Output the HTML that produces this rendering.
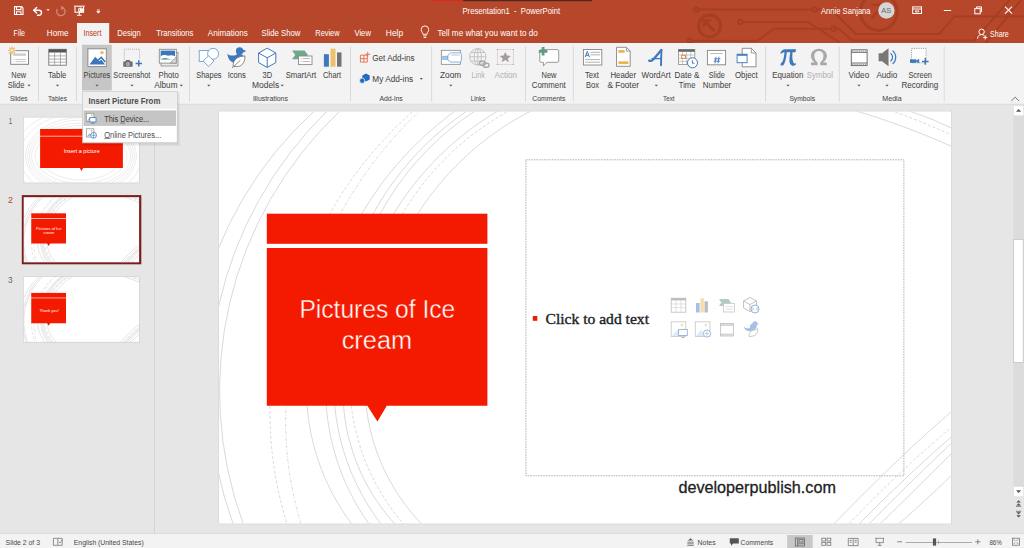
<!DOCTYPE html>
<html><head><meta charset="utf-8"><title>PowerPoint</title>
<style>html,body{margin:0;padding:0;width:1024px;height:548px;overflow:hidden;background:#fff}svg{display:block}text{white-space:pre}</style>
</head><body>
<svg width="1024" height="548" viewBox="0 0 1024 548" font-family="Liberation Sans, sans-serif">
<rect x="0" y="0" width="1024" height="43" fill="#B7472A"/>
<g fill="none" stroke="#A63F22" stroke-width="2" opacity="1"><circle cx="696.2" cy="9.6" r="2.2"/><path d="M698.4 9.6H812.6"/><circle cx="814.8" cy="9.6" r="2.2"/><path d="M817 9.6H831L856 34H939.2L954.4 16.4H1024"/><circle cx="740.3" cy="21.9" r="2.2"/><path d="M742.5 21.9H807.9L842 44"/><circle cx="689.7" cy="40.8" r="2.2"/><path d="M691.9 40.8H757.3L773.8 28.7H831.3"/><circle cx="833.5" cy="28.7" r="2.2"/><path d="M835.7 28.7H839.4L852 40.6H974.3L1009.5 0"/><path d="M984.9 44L1021 0"/><circle cx="709.6" cy="26" r="11" stroke-width="3"/><path d="M703 19.5H711.5L703 28Z" fill="#A63F22" stroke-width="0.5"/><path d="M705.5 22L714.5 31" stroke-width="3"/><circle cx="878.8" cy="12" r="18.4" stroke-width="3"/><path d="M871.5 4.7H884M884 4.7L871.5 18.5" stroke-width="2.6"/></g>
<rect x="431.5" y="0" width="31.7" height="1.2" fill="#D62A22"/><rect x="463.2" y="0" width="128.7" height="1.2" fill="#4A2A22"/>
<g fill="none" stroke="#FFFFFF" stroke-width="1.1"><path d="M14.5 6.6H21.6L23 8V14.5H14.5Z"/><path d="M16.5 6.6V9.6H21V6.6"/><path d="M16.5 14.5V11.8H21V14.5"/></g>
<g fill="none" stroke="#FFFFFF" stroke-width="1.4" stroke-linecap="round"><path d="M34 10.3H39A2.5 2.5 0 0 1 39 15.3H37.5"/><path d="M36.6 7.6L33.8 10.3L36.6 13"/></g>
<path d="M46.4 9.3H49.7L48.05 10.9Z" fill="#fff"/>
<g fill="none" stroke="#fff" stroke-opacity="0.35" stroke-width="1.3"><path d="M62.2 7.5A4.2 4.2 0 1 1 57.5 9"/><path d="M61 6.2L62.8 7.7L61.2 9.5"/></g>
<g fill="none" stroke="#fff" stroke-width="1.1"><path d="M73.9 6.2H84.7"/><path d="M75 7V12.3H83.6V7"/><path d="M79.3 12.3V14.8M77 15.3H81.6"/><circle cx="80.6" cy="10" r="2"/><path d="M80.4 8.9L81.9 10L80.4 11.1Z" fill="#fff"/></g>
<path d="M96.9 10H99.8M96.9 11.4H99.8L98.35 13.2Z" stroke="#fff" stroke-width="0.8" fill="#fff"/>
<text x="462.50" y="14.2" font-size="8.6" font-family="Liberation Sans" font-weight="normal" fill="#FFFFFF" textLength="97.55" lengthAdjust="spacingAndGlyphs" xml:space="preserve">Presentation1  -  PowerPoint</text>
<text x="821.00" y="14.2" font-size="8.6" font-family="Liberation Sans" font-weight="normal" fill="#FFFFFF" textLength="49.60" lengthAdjust="spacingAndGlyphs" xml:space="preserve">Annie Sanjana</text>
<circle cx="886.4" cy="10.5" r="8.2" fill="#D6D6D6"/>
<text x="881.20" y="13.3" font-size="6.8" font-family="Liberation Sans" font-weight="normal" fill="#666666" textLength="9.89" lengthAdjust="spacingAndGlyphs" xml:space="preserve">AS</text>
<g fill="none" stroke="#fff" stroke-width="1"><rect x="912.7" y="6.9" width="8.8" height="6.6"/><path d="M912.7 9H921.5"/><path d="M915 11.3L916.4 10.2V12.4ZM919.2 11.3L917.8 10.2V12.4Z" fill="#fff" stroke-width="0.5"/><path d="M943.8 10.5H951.1"/><rect x="974.8" y="8.6" width="5.4" height="5.2"/><path d="M976.6 8.6V6.9H981.5V11.8H980.2"/><path d="M1005 6.6L1012 13.6M1012 6.6L1005 13.6" stroke-width="1.1"/></g>
<g fill="none" stroke="#fff" stroke-width="1"><circle cx="981.6" cy="31.8" r="2.7"/><path d="M977.4 38.7C977.8 35.6 979.4 34.6 981.6 34.6C982.8 34.6 983.8 35 984.4 35.7"/><path d="M985.2 35.4V39.4M983.2 37.4H987.2"/></g>
<text x="990.10" y="36.9" font-size="8.6" font-family="Liberation Sans" font-weight="normal" fill="#FFFFFF" textLength="18.62" lengthAdjust="spacingAndGlyphs" xml:space="preserve">Share</text>
<rect x="77" y="23" width="32.2" height="20.5" fill="#F3F3F3"/>
<text x="13.60" y="36.1" font-size="8.6" font-family="Liberation Sans" font-weight="normal" fill="#FFFFFF" textLength="11.42" lengthAdjust="spacingAndGlyphs" xml:space="preserve">File</text>
<text x="46.80" y="36.1" font-size="8.6" font-family="Liberation Sans" font-weight="normal" fill="#FFFFFF" textLength="21.69" lengthAdjust="spacingAndGlyphs" xml:space="preserve">Home</text>
<text x="117.20" y="36.1" font-size="8.6" font-family="Liberation Sans" font-weight="normal" fill="#FFFFFF" textLength="23.61" lengthAdjust="spacingAndGlyphs" xml:space="preserve">Design</text>
<text x="156.30" y="36.1" font-size="8.6" font-family="Liberation Sans" font-weight="normal" fill="#FFFFFF" textLength="37.16" lengthAdjust="spacingAndGlyphs" xml:space="preserve">Transitions</text>
<text x="207.80" y="36.1" font-size="8.6" font-family="Liberation Sans" font-weight="normal" fill="#FFFFFF" textLength="39.98" lengthAdjust="spacingAndGlyphs" xml:space="preserve">Animations</text>
<text x="261.60" y="36.1" font-size="8.6" font-family="Liberation Sans" font-weight="normal" fill="#FFFFFF" textLength="38.88" lengthAdjust="spacingAndGlyphs" xml:space="preserve">Slide Show</text>
<text x="315.30" y="36.1" font-size="8.6" font-family="Liberation Sans" font-weight="normal" fill="#FFFFFF" textLength="24.31" lengthAdjust="spacingAndGlyphs" xml:space="preserve">Review</text>
<text x="354.40" y="36.1" font-size="8.6" font-family="Liberation Sans" font-weight="normal" fill="#FFFFFF" textLength="16.59" lengthAdjust="spacingAndGlyphs" xml:space="preserve">View</text>
<text x="385.80" y="36.1" font-size="8.6" font-family="Liberation Sans" font-weight="normal" fill="#FFFFFF" textLength="17.38" lengthAdjust="spacingAndGlyphs" xml:space="preserve">Help</text>
<text x="437.40" y="36.1" font-size="8.6" font-family="Liberation Sans" font-weight="normal" fill="#FFFFFF" textLength="100.39" lengthAdjust="spacingAndGlyphs" xml:space="preserve">Tell me what you want to do</text>
<text x="83.40" y="36.1" font-size="8.6" font-family="Liberation Sans" font-weight="normal" fill="#B7472A" textLength="18.08" lengthAdjust="spacingAndGlyphs" stroke="#B7472A" stroke-width="0.05" xml:space="preserve">Insert</text>
<g fill="none" stroke="#fff" stroke-width="0.9"><path d="M422.9 34.3C422.9 32.6 421.2 31.6 421.2 29.6A3.75 3.75 0 0 1 428.7 29.6C428.7 31.6 427 32.6 427 34.3Z"/><path d="M423.2 35.9H426.7M423.7 37.5H426.2"/></g>
<rect x="0" y="43" width="1024" height="61" fill="#F3F3F3"/>
<rect x="0" y="103.8" width="1024" height="1" fill="#D6D6D6"/>
<rect x="38.0" y="46.5" width="1" height="55" fill="#DADADA"/>
<rect x="75.9" y="46.5" width="1" height="55" fill="#DADADA"/>
<rect x="189.0" y="46.5" width="1" height="55" fill="#DADADA"/>
<rect x="350.0" y="46.5" width="1" height="55" fill="#DADADA"/>
<rect x="431.1" y="46.5" width="1" height="55" fill="#DADADA"/>
<rect x="525.0" y="46.5" width="1" height="55" fill="#DADADA"/>
<rect x="572.8" y="46.5" width="1" height="55" fill="#DADADA"/>
<rect x="765.1" y="46.5" width="1" height="55" fill="#DADADA"/>
<rect x="838.8" y="46.5" width="1" height="55" fill="#DADADA"/>
<rect x="943.7" y="46.5" width="1" height="55" fill="#DADADA"/>
<g><rect x="10.7" y="50.7" width="17.8" height="13.6" fill="#fff" stroke="#858585" stroke-width="1"/><rect x="13.2" y="53.3" width="12.8" height="2.6" fill="#CFCFCF"/><path d="M13.2 59.5H14M15.4 59.5H26M13.2 61.6H14M15.4 61.6H26" stroke="#C4C4C4" stroke-width="0.9"/><circle cx="12.07" cy="50.5" r="3" fill="#F3F3F3"/><g stroke="#EDB45A" stroke-width="1.2"><path d="M13.67 50.50L16.07 50.50M13.20 51.63L14.90 53.33M12.07 52.10L12.07 54.50M10.94 51.63L9.24 53.33M10.47 50.50L8.07 50.50M10.94 49.37L9.24 47.67M12.07 48.90L12.07 46.50M13.20 49.37L14.90 47.67"/></g><circle cx="12.07" cy="50.5" r="1.3" fill="#fff" stroke="#EDB45A" stroke-width="0.7"/></g>
<text x="11.30" y="78" font-size="8.4" font-family="Liberation Sans" font-weight="normal" fill="#474747" textLength="14.86" lengthAdjust="spacingAndGlyphs" stroke="#474747" stroke-width="0.05" xml:space="preserve">New</text>
<text x="7.70" y="88.2" font-size="8.4" font-family="Liberation Sans" font-weight="normal" fill="#474747" textLength="16.69" lengthAdjust="spacingAndGlyphs" stroke="#474747" stroke-width="0.05" xml:space="preserve">Slide</text>
<path d="M27.4 84.69999999999999H30.6L29 86.5Z" fill="#555555"/>
<text x="9.90" y="100.7" font-size="7.8" font-family="Liberation Sans" font-weight="normal" fill="#474747" textLength="17.72" lengthAdjust="spacingAndGlyphs" stroke="#474747" stroke-width="0.05" xml:space="preserve">Slides</text>
<g><rect x="48.8" y="49.3" width="17.5" height="15.9" fill="#fff" stroke="#777" stroke-width="0.9"/><rect x="48.8" y="49.3" width="17.5" height="3.2" fill="#555"/><path d="M48.8 55.9H66.3M48.8 59.1H66.3M48.8 62.2H66.3M54.6 52.5V65.2M60.5 52.5V65.2" stroke="#9B9B9B" stroke-width="0.8"/></g>
<text x="48.00" y="78" font-size="8.4" font-family="Liberation Sans" font-weight="normal" fill="#474747" textLength="18.39" lengthAdjust="spacingAndGlyphs" stroke="#474747" stroke-width="0.05" xml:space="preserve">Table</text>
<path d="M55.9 84.69999999999999H59.1L57.5 86.5Z" fill="#555555"/>
<text x="48.00" y="100.7" font-size="7.8" font-family="Liberation Sans" font-weight="normal" fill="#474747" textLength="18.91" lengthAdjust="spacingAndGlyphs" stroke="#474747" stroke-width="0.05" xml:space="preserve">Tables</text>
<rect x="82" y="44.8" width="29.8" height="45.7" fill="#C6C6C6"/>
<g><rect x="87.9" y="48.8" width="18.4" height="17.8" fill="#fff" stroke="#8C8C8C" stroke-width="1"/><path d="M89.5 64.6L95.2 56.8L99.5 61.2L101.3 59.4L105 64.6Z" fill="#3C77BD"/><path d="M97.8 60.5L101.3 57.3L105.2 62" fill="none" stroke="#3C77BD" stroke-width="1.6"/><circle cx="102" cy="52.6" r="1.7" fill="#F2B74F"/></g>
<text x="83.60" y="77.8" font-size="8.4" font-family="Liberation Sans" font-weight="normal" fill="#474747" textLength="26.56" lengthAdjust="spacingAndGlyphs" stroke="#474747" stroke-width="0.05" xml:space="preserve">Pictures</text>
<path d="M95.4 84.69999999999999H98.6L97 86.5Z" fill="#555555"/>
<g><path d="M124.3 59.5V49.2H139.6V59.5" fill="none" stroke="#8A8A8A" stroke-width="0.7" stroke-dasharray="0.9 1.1"/><path d="M123.3 61.5H125.2L126.2 60H129.5L130.5 61.5H132.6V66.8H123.3Z" fill="#6B6B6B"/><circle cx="127.9" cy="64" r="1.7" fill="#F3F3F3"/><circle cx="127.9" cy="64" r="0.9" fill="#6B6B6B"/><path d="M135.6 63.4H142M138.8 60.2V66.6" stroke="#3C77BD" stroke-width="1.5"/></g>
<text x="113.30" y="78" font-size="8.4" font-family="Liberation Sans" font-weight="normal" fill="#474747" textLength="37.11" lengthAdjust="spacingAndGlyphs" stroke="#474747" stroke-width="0.05" xml:space="preserve">Screenshot</text>
<path d="M130.4 84.69999999999999H133.6L132 86.5Z" fill="#555555"/>
<g><rect x="161" y="52.5" width="17" height="13.5" fill="#E9E9E9" stroke="#8A8A8A" stroke-width="0.8"/><rect x="159.3" y="49.3" width="17" height="13.8" fill="#fff" stroke="#8A8A8A" stroke-width="0.9"/><rect x="160.6" y="50.6" width="14.4" height="8.6" fill="#3C77BD"/><path d="M160.6 56.5C163 54.5 166 55 168 55.8C170 54.8 173 55 175 56.2V59.2H160.6Z" fill="#fff"/><path d="M160.6 59.5C163 57.5 167 57.5 170 59.5Z" fill="#5E9E7E"/><path d="M176.3 57L170 63.1H176.3Z" fill="#D9D9D9" stroke="#8A8A8A" stroke-width="0.7"/></g>
<text x="158.60" y="78" font-size="8.4" font-family="Liberation Sans" font-weight="normal" fill="#474747" textLength="20.09" lengthAdjust="spacingAndGlyphs" stroke="#474747" stroke-width="0.05" xml:space="preserve">Photo</text>
<text x="154.30" y="88.2" font-size="8.4" font-family="Liberation Sans" font-weight="normal" fill="#474747" textLength="23.18" lengthAdjust="spacingAndGlyphs" stroke="#474747" stroke-width="0.05" xml:space="preserve">Album</text>
<path d="M179.70000000000002 84.69999999999999H182.9L181.3 86.5Z" fill="#555555"/>
<g fill="#fff" stroke="#5A93D0" stroke-width="0.8"><rect x="199.2" y="50.6" width="10.4" height="10.8"/><circle cx="213.1" cy="53.8" r="5.5"/><path d="M208.6 55.7L214 61.1L208.6 66.5L203.2 61.1Z"/></g>
<text x="196.30" y="78" font-size="8.4" font-family="Liberation Sans" font-weight="normal" fill="#474747" textLength="25.17" lengthAdjust="spacingAndGlyphs" stroke="#474747" stroke-width="0.05" xml:space="preserve">Shapes</text>
<path d="M207.20000000000002 84.69999999999999H210.4L208.8 86.5Z" fill="#555555"/>
<g><circle cx="239.6" cy="50.9" r="3.7" fill="#3E79BD"/><path d="M242.5 49.6L246.4 50.9L242.5 52.7Z" fill="#3E79BD"/><path d="M227.4 53.4C229 55.6 232.5 56.2 236.2 55L237.3 53.2L242.6 54.8C243.8 58.3 242 61.8 237.8 62.8C233.2 63.8 227.8 61 227.4 53.4Z" fill="#3E79BD"/><path d="M233.2 66.4C232.8 61.2 236 57.6 240.6 56.6L245 55.9C245 60.6 243.6 64.4 240.2 65.9C238.2 66.7 235.6 66.7 233.2 66.4Z" fill="#fff" stroke="#7A7A7A" stroke-width="0.9"/><path d="M231.9 68L240.3 60.4" fill="none" stroke="#7A7A7A" stroke-width="0.9"/></g>
<text x="227.70" y="78" font-size="8.4" font-family="Liberation Sans" font-weight="normal" fill="#474747" textLength="18.07" lengthAdjust="spacingAndGlyphs" stroke="#474747" stroke-width="0.05" xml:space="preserve">Icons</text>
<g fill="#fff" stroke="#3E79BD" stroke-width="1" stroke-linejoin="round"><path d="M267.2 48.2L275.8 53V62.6L267.2 67.4L258.6 62.6V53Z"/><path d="M258.6 53L267.2 57.8L275.8 53M267.2 57.8V67.4" fill="none"/></g>
<text x="262.50" y="78" font-size="8.4" font-family="Liberation Sans" font-weight="normal" fill="#474747" textLength="9.54" lengthAdjust="spacingAndGlyphs" stroke="#474747" stroke-width="0.05" xml:space="preserve">3D</text>
<text x="252.00" y="88.3" font-size="8.4" font-family="Liberation Sans" font-weight="normal" fill="#474747" textLength="27.19" lengthAdjust="spacingAndGlyphs" stroke="#474747" stroke-width="0.05" xml:space="preserve">Models</text>
<path d="M280.59999999999997 84.69999999999999H283.8L282.2 86.5Z" fill="#555555"/>
<g><path d="M292 50.5H304.5L308 55L304.5 59.3H292L295.3 55Z" fill="#6EA98A"/><rect x="298.5" y="56" width="13.5" height="8.6" fill="#fff" stroke="#8A8A8A" stroke-width="0.9"/><path d="M300.5 58.6H301.5M302.8 58.6H310M300.5 61.6H301.5M302.8 61.6H310" stroke="#A0A0A0" stroke-width="0.8"/></g>
<text x="285.70" y="78" font-size="8.4" font-family="Liberation Sans" font-weight="normal" fill="#474747" textLength="30.58" lengthAdjust="spacingAndGlyphs" stroke="#474747" stroke-width="0.05" xml:space="preserve">SmartArt</text>
<g><rect x="323.9" y="54.2" width="5" height="12.5" fill="#3E79BD"/><rect x="330.5" y="48.6" width="5" height="18.1" fill="#EDC26C"/><rect x="337" y="52.4" width="4.5" height="14.3" fill="#737373"/></g>
<text x="323.00" y="78" font-size="8.4" font-family="Liberation Sans" font-weight="normal" fill="#474747" textLength="18.10" lengthAdjust="spacingAndGlyphs" stroke="#474747" stroke-width="0.05" xml:space="preserve">Chart</text>
<text x="252.90" y="100.7" font-size="7.8" font-family="Liberation Sans" font-weight="normal" fill="#474747" textLength="35.01" lengthAdjust="spacingAndGlyphs" stroke="#474747" stroke-width="0.05" xml:space="preserve">Illustrations</text>
<g fill="none" stroke="#E2683F" stroke-width="0.85"><path d="M360.4 55.2H367.3V62.1H360.4ZM363.85 55.2V62.1M360.4 58.65H367.3"/><path d="M367.7 51.8V56.8M365.2 54.3H370.2"/></g>
<text x="372.30" y="61" font-size="8.4" font-family="Liberation Sans" font-weight="normal" fill="#474747" textLength="42.38" lengthAdjust="spacingAndGlyphs" stroke="#474747" stroke-width="0.05" xml:space="preserve">Get Add-ins</text>
<g fill="#1F6DC2"><path d="M366 73.5L369.7 75.4V79.6L366 81.5L362.3 79.6V75.4Z"/><circle cx="362.2" cy="80.7" r="2.6" stroke="#F3F3F3" stroke-width="0.7"/></g>
<text x="372.30" y="81.6" font-size="8.4" font-family="Liberation Sans" font-weight="normal" fill="#474747" textLength="40.88" lengthAdjust="spacingAndGlyphs" stroke="#474747" stroke-width="0.05" xml:space="preserve">My Add-ins</text>
<path d="M419.7 78.0H422.90000000000003L421.3 79.80000000000001Z" fill="#555555"/>
<text x="379.40" y="100.6" font-size="7.8" font-family="Liberation Sans" font-weight="normal" fill="#474747" textLength="23.31" lengthAdjust="spacingAndGlyphs" stroke="#474747" stroke-width="0.05" xml:space="preserve">Add-ins</text>
<g><rect x="441.3" y="50.3" width="19" height="14" fill="#fff" stroke="#858585" stroke-width="0.8"/><rect x="442.7" y="56.2" width="5.2" height="3.2" fill="#A9C6E8" stroke="#6A9FD8" stroke-width="0.6"/><path d="M447.9 55.4L450.8 52.8H459.8Q461.4 52.8 461.4 54.4V60.4Q461.4 62 459.8 62H450.8L447.9 60.2Z" fill="#fff" stroke="#6A9FD8" stroke-width="0.8"/><path d="M451.5 55H459.5" stroke="#BBBBBB" stroke-width="0.9"/></g>
<text x="440.00" y="78" font-size="8.4" font-family="Liberation Sans" font-weight="normal" fill="#474747" textLength="21.18" lengthAdjust="spacingAndGlyphs" stroke="#474747" stroke-width="0.05" xml:space="preserve">Zoom</text>
<path d="M449.2 84.69999999999999H452.40000000000003L450.8 86.5Z" fill="#555555"/>
<g fill="none" stroke="#BDBDBD" stroke-width="0.9"><circle cx="477.8" cy="56.8" r="8.2"/><ellipse cx="477.8" cy="56.8" rx="3.6" ry="8.2"/><path d="M469.6 56.8H486M471 52.5H484.6M471 61.1H484.6M477.8 48.6V65"/></g><g fill="none" stroke="#A8A8A8" stroke-width="1.4"><rect x="479.5" y="61.2" width="5.8" height="4" rx="2"/><rect x="483.2" y="63.2" width="5.8" height="4" rx="2"/></g>
<text x="471.60" y="78" font-size="8.4" font-family="Liberation Sans" font-weight="normal" fill="#B4B4B4" textLength="13.20" lengthAdjust="spacingAndGlyphs" stroke="#B4B4B4" stroke-width="0.05" xml:space="preserve">Link</text>
<g><rect x="497.3" y="49.6" width="16" height="14.8" fill="#F6F0F3" stroke="#D2CBCE" stroke-width="0.7"/><path d="M496.8 49.1h1v1h-1zM512.8 49.1h1v1h-1zM496.8 63.9h1v1h-1zM512.8 63.9h1v1h-1z" fill="#999"/><path d="M505.3 52L507 55.6L510.9 55.9L507.9 58.4L508.9 62.2L505.3 60.1L501.7 62.2L502.7 58.4L499.7 55.9L503.6 55.6Z" fill="#9E9E9E"/></g>
<text x="494.50" y="78" font-size="8.4" font-family="Liberation Sans" font-weight="normal" fill="#B4B4B4" textLength="22.47" lengthAdjust="spacingAndGlyphs" stroke="#B4B4B4" stroke-width="0.05" xml:space="preserve">Action</text>
<text x="470.70" y="100.7" font-size="7.8" font-family="Liberation Sans" font-weight="normal" fill="#474747" textLength="14.72" lengthAdjust="spacingAndGlyphs" stroke="#474747" stroke-width="0.05" xml:space="preserve">Links</text>
<g><path d="M541.2 49.6H557.3Q558.7 49.6 558.7 51V60.9Q558.7 62.3 557.3 62.3H547L543.4 65.9V62.3H541.2Q539.8 62.3 539.8 60.9V51Q539.8 49.6 541.2 49.6Z" fill="#fff" stroke="#8E8E8E" stroke-width="0.9"/><path d="M543.1 47V55.6M538.8 51.3H547.4" stroke="#5E9E7E" stroke-width="2.8"/></g>
<text x="541.50" y="78" font-size="8.4" font-family="Liberation Sans" font-weight="normal" fill="#474747" textLength="15.05" lengthAdjust="spacingAndGlyphs" stroke="#474747" stroke-width="0.05" xml:space="preserve">New</text>
<text x="531.80" y="88.2" font-size="8.4" font-family="Liberation Sans" font-weight="normal" fill="#474747" textLength="33.97" lengthAdjust="spacingAndGlyphs" stroke="#474747" stroke-width="0.05" xml:space="preserve">Comment</text>
<text x="532.30" y="100.7" font-size="7.8" font-family="Liberation Sans" font-weight="normal" fill="#474747" textLength="33.11" lengthAdjust="spacingAndGlyphs" stroke="#474747" stroke-width="0.05" xml:space="preserve">Comments</text>
<g><rect x="583.4" y="49.5" width="18.4" height="15.5" fill="#fff" stroke="#858585" stroke-width="0.9"/><path d="M585.2 57.2L587.3 51.4L589.4 57.2M585.9 55.3H588.7" fill="none" stroke="#3E79BD" stroke-width="1"/><path d="M590.6 52.3H600M590.6 54.8H600M585.2 59.6H600M585.2 62.2H600" stroke="#9E9E9E" stroke-width="0.8"/></g>
<text x="585.00" y="78" font-size="8.4" font-family="Liberation Sans" font-weight="normal" fill="#474747" textLength="13.99" lengthAdjust="spacingAndGlyphs" stroke="#474747" stroke-width="0.05" xml:space="preserve">Text</text>
<text x="586.00" y="88.2" font-size="8.4" font-family="Liberation Sans" font-weight="normal" fill="#474747" textLength="12.88" lengthAdjust="spacingAndGlyphs" stroke="#474747" stroke-width="0.05" xml:space="preserve">Box</text>
<g><path d="M616.5 47.3H626.4L630.2 51.1V66.3H616.5Z" fill="#fff" stroke="#858585" stroke-width="0.9"/><path d="M626.4 47.3V51.1H630.2" fill="none" stroke="#858585" stroke-width="0.8"/><rect x="618.4" y="50" width="6.2" height="2.8" fill="#EDB54F"/><rect x="618.4" y="61.3" width="10" height="2.8" fill="#EDB54F"/></g>
<text x="610.40" y="78" font-size="8.4" font-family="Liberation Sans" font-weight="normal" fill="#474747" textLength="25.70" lengthAdjust="spacingAndGlyphs" stroke="#474747" stroke-width="0.05" xml:space="preserve">Header</text>
<text x="607.40" y="88.2" font-size="8.4" font-family="Liberation Sans" font-weight="normal" fill="#474747" textLength="31.59" lengthAdjust="spacingAndGlyphs" stroke="#474747" stroke-width="0.05" xml:space="preserve">&amp; Footer</text>
<g fill="none" stroke="#3E79BD" stroke-linecap="round"><path d="M649.2 60.6Q651.5 61.6 653.5 59.2L661.4 50" stroke-width="2.3"/><path d="M661.4 50L661 65.3" stroke-width="1.9"/><path d="M652 58.6H660.6" stroke-width="1.3"/></g>
<text x="641.60" y="78" font-size="8.4" font-family="Liberation Sans" font-weight="normal" fill="#474747" textLength="29.16" lengthAdjust="spacingAndGlyphs" stroke="#474747" stroke-width="0.05" xml:space="preserve">WordArt</text>
<path d="M654.6999999999999 84.69999999999999H657.9L656.3 86.5Z" fill="#555555"/>
<g><rect x="678.4" y="49.4" width="16.4" height="15" fill="#fff" stroke="#8A8A8A" stroke-width="0.8"/><rect x="678.4" y="49.4" width="16.4" height="2.4" fill="#666"/><path d="M678.4 55H694.8M678.4 58.3H694.8M678.4 61.4H694.8M682.5 51.8V64.4M686.6 51.8V64.4M690.7 51.8V64.4" stroke="#B0B0B0" stroke-width="0.7"/><rect x="681.6" y="55.3" width="3.8" height="3.1" fill="#fff" stroke="#E8834F" stroke-width="1"/><circle cx="692.5" cy="62.8" r="5" fill="#fff" stroke="#3E79BD" stroke-width="1"/><path d="M692.3 60.2V63.2H694.6" fill="none" stroke="#555" stroke-width="0.8"/></g>
<text x="674.60" y="78" font-size="8.4" font-family="Liberation Sans" font-weight="normal" fill="#474747" textLength="24.70" lengthAdjust="spacingAndGlyphs" stroke="#474747" stroke-width="0.05" xml:space="preserve">Date &amp;</text>
<text x="678.80" y="88.2" font-size="8.4" font-family="Liberation Sans" font-weight="normal" fill="#474747" textLength="16.59" lengthAdjust="spacingAndGlyphs" stroke="#474747" stroke-width="0.05" xml:space="preserve">Time</text>
<g><rect x="707.4" y="50.4" width="18.2" height="14.4" fill="#fff" stroke="#858585" stroke-width="0.9"/><path d="M710.2 53.5H722.8" stroke="#B5B5B5" stroke-width="0.9"/><path d="M716 56.8L715 63.3M719 56.8L718 63.3M714 58.9H720.4M713.6 61.2H720" stroke="#3E79BD" stroke-width="0.9"/></g>
<text x="708.80" y="78" font-size="8.4" font-family="Liberation Sans" font-weight="normal" fill="#474747" textLength="15.91" lengthAdjust="spacingAndGlyphs" stroke="#474747" stroke-width="0.05" xml:space="preserve">Slide</text>
<text x="702.70" y="88.2" font-size="8.4" font-family="Liberation Sans" font-weight="normal" fill="#474747" textLength="28.60" lengthAdjust="spacingAndGlyphs" stroke="#474747" stroke-width="0.05" xml:space="preserve">Number</text>
<g><path d="M742.2 48.3H751.3L756 53V66.8H742.2Z" fill="#fff" stroke="#858585" stroke-width="0.9"/><path d="M751.3 48.3V53H756" fill="none" stroke="#858585" stroke-width="0.8"/><rect x="737.1" y="54.2" width="10" height="8.5" fill="#fff" stroke="#3E79BD" stroke-width="0.9"/><rect x="737.1" y="54.2" width="10" height="1.6" fill="#3E79BD"/></g>
<text x="734.90" y="78" font-size="8.4" font-family="Liberation Sans" font-weight="normal" fill="#474747" textLength="22.77" lengthAdjust="spacingAndGlyphs" stroke="#474747" stroke-width="0.05" xml:space="preserve">Object</text>
<text x="663.00" y="100.7" font-size="7.8" font-family="Liberation Sans" font-weight="normal" fill="#474747" textLength="11.62" lengthAdjust="spacingAndGlyphs" stroke="#474747" stroke-width="0.05" xml:space="preserve">Text</text>
<path d="M780.3 53.2C781.3 50.5 782.8 49.3 785.5 49.3H796.2L795.4 52.3H792.6C792.2 55.5 792 59 793.2 62C793.8 63.4 794.8 64 795.8 63.3L796.3 64C795.2 65.4 793.8 65.9 792.3 65.7C790.2 65.2 789.4 63 789.4 60.3C789.4 57.7 789.8 55 790.3 52.3H786.8C786.4 56 785.8 60.5 784.3 63.7C783.8 64.9 782.8 65.6 781.8 65.6C780.8 65.6 780.3 64.9 780.6 64C781 63 782.3 62.3 782.9 60.8C783.8 58.3 784.3 55 784.5 52.3C782.8 52.3 781.8 53 781 54Z" fill="#3E79BD"/>
<text x="772.20" y="78" font-size="8.4" font-family="Liberation Sans" font-weight="normal" fill="#474747" textLength="31.18" lengthAdjust="spacingAndGlyphs" stroke="#474747" stroke-width="0.05" xml:space="preserve">Equation</text>
<path d="M786.4 84.69999999999999H789.6L788 86.5Z" fill="#555555"/>
<path d="M811 65.3V62.5H814.8C812.5 61 810.9 58.6 810.9 55.8C810.9 51.7 814.5 48.7 818.9 48.7C823.3 48.7 826.9 51.7 826.9 55.8C826.9 58.6 825.3 61 823 62.5H826.8V65.3H820.2V62.6C822.4 61.2 823.5 58.7 823.5 55.8C823.5 52.8 821.5 50.9 818.9 50.9C816.3 50.9 814.3 52.8 814.3 55.8C814.3 58.7 815.4 61.2 817.6 62.6V65.3Z" fill="#A8A8A8"/>
<text x="806.80" y="78" font-size="8.4" font-family="Liberation Sans" font-weight="normal" fill="#B4B4B4" textLength="26.17" lengthAdjust="spacingAndGlyphs" stroke="#B4B4B4" stroke-width="0.05" xml:space="preserve">Symbol</text>
<text x="789.40" y="100.7" font-size="7.8" font-family="Liberation Sans" font-weight="normal" fill="#474747" textLength="25.71" lengthAdjust="spacingAndGlyphs" stroke="#474747" stroke-width="0.05" xml:space="preserve">Symbols</text>
<g><rect x="851.3" y="49.8" width="15.8" height="15.8" fill="#fff" stroke="#666" stroke-width="0.9"/><path d="M851.3 52.4H867.1M851.3 63H867.1" stroke="#666" stroke-width="0.9"/><path d="M852.8 50.6V51.6M854.9 50.6V51.6M857 50.6V51.6M859.1 50.6V51.6M861.2 50.6V51.6M863.3 50.6V51.6M865.4 50.6V51.6M852.8 63.8V64.8M854.9 63.8V64.8M857 63.8V64.8M859.1 63.8V64.8M861.2 63.8V64.8M863.3 63.8V64.8M865.4 63.8V64.8" stroke="#666" stroke-width="1"/></g>
<text x="848.50" y="78" font-size="8.4" font-family="Liberation Sans" font-weight="normal" fill="#474747" textLength="20.67" lengthAdjust="spacingAndGlyphs" stroke="#474747" stroke-width="0.05" xml:space="preserve">Video</text>
<path d="M857.4 84.69999999999999H860.6L859 86.5Z" fill="#555555"/>
<g><path d="M878.6 53.3H882L888.5 48.2V66.3L882 61.2H878.6Z" fill="#777"/><path d="M890.5 53.2A5 5 0 0 1 890.5 61.3M892.6 50.6A8.6 8.6 0 0 1 892.6 63.9" fill="none" stroke="#3E79BD" stroke-width="1.2"/></g>
<text x="876.40" y="78" font-size="8.4" font-family="Liberation Sans" font-weight="normal" fill="#474747" textLength="20.87" lengthAdjust="spacingAndGlyphs" stroke="#474747" stroke-width="0.05" xml:space="preserve">Audio</text>
<path d="M885.4 84.69999999999999H888.6L887 86.5Z" fill="#555555"/>
<g><rect x="911.6" y="48.4" width="14.4" height="14.4" fill="#fff" stroke="#8A8A8A" stroke-width="0.8" stroke-dasharray="1.2 1.1"/><rect x="910" y="59.3" width="6.2" height="3.6" fill="#3E79BD"/><path d="M916.2 60.3L919.2 59V63.2L916.2 61.9Z" fill="#3E79BD"/><path d="M922 61.4H928.6M925.3 58.1V64.7" stroke="#3E79BD" stroke-width="1.5"/></g>
<text x="908.40" y="78" font-size="8.4" font-family="Liberation Sans" font-weight="normal" fill="#474747" textLength="23.50" lengthAdjust="spacingAndGlyphs" stroke="#474747" stroke-width="0.05" xml:space="preserve">Screen</text>
<text x="901.50" y="88.2" font-size="8.4" font-family="Liberation Sans" font-weight="normal" fill="#474747" textLength="36.77" lengthAdjust="spacingAndGlyphs" stroke="#474747" stroke-width="0.05" xml:space="preserve">Recording</text>
<text x="882.30" y="100.7" font-size="7.8" font-family="Liberation Sans" font-weight="normal" fill="#474747" textLength="19.30" lengthAdjust="spacingAndGlyphs" stroke="#474747" stroke-width="0.05" xml:space="preserve">Media</text>
<path d="M1011.3 101L1015.2 97.2L1019.1 101" fill="none" stroke="#666" stroke-width="0.9"/>
<rect x="0" y="104.8" width="1024" height="429.2" fill="#E6E6E6"/>
<rect x="154" y="104.8" width="1" height="429.2" fill="#D4D4D4"/>
<rect x="218" y="110.5" width="734" height="414" fill="#DCDCDC"/>
<rect x="219" y="111.5" width="732" height="412" fill="#fff"/>
<clipPath id="slc"><rect x="219" y="111.5" width="732" height="412"/></clipPath>
<g clip-path="url(#slc)"><g fill="none" stroke="#D5D5D5" stroke-width="0.9"><path d="M419.6 105.5 L416.7 108.0 L413.7 110.6 L410.8 113.1 L408.0 115.7 L405.1 118.4 L402.3 121.0 L399.5 123.7 L396.7 126.4 L394.0 129.1 L391.3 131.9 L388.6 134.7 L385.9 137.5 L383.3 140.3 L380.7 143.2 L378.1 146.1 L375.5 149.0 L373.0 151.9 L370.5 154.9 L368.1 157.9 L365.6 160.9 L363.2 163.9 L360.8 167.0 L358.5 170.1 L356.2 173.2 L353.9 176.3 L351.6 179.4 L349.4 182.6 L347.2 185.8 L345.0 189.0 L342.9 192.3 L340.8 195.5 L338.7 198.8 L336.7 202.1 L334.7 205.4 L332.7 208.7 L330.8 212.1 L328.9 215.4 L327.0 218.8 L325.1 222.2" stroke-dasharray="3 2"/><path d="M270.3 396.0 L270.1 399.6 L270.0 403.1 L270.0 406.7 L269.9 410.2 L270.0 413.8 L270.0 417.3 L270.1 420.9 L270.2 424.5 L270.3 428.0 L270.5 431.6 L270.7 435.1 L270.9 438.7 L271.2 442.2 L271.5 445.8 L271.8 449.3 L272.2 452.8 L272.6 456.4 L273.1 459.9 L273.5 463.4 L274.0 467.0 L274.6 470.5 L275.2 474.0 L275.8 477.5 L276.4 481.0 L277.1 484.5 L277.8 488.0 L278.5 491.4 L279.3 494.9 L280.1 498.4 L280.9 501.8 L281.8 505.3 L282.7 508.7 L283.6 512.2 L284.6 515.6 L285.6 519.0 L286.6 522.4 L287.7 525.8 L288.8 529.2 L289.9 532.6" stroke-dasharray="3 2"/><path d="M425.8 105.2 L423.0 107.8 L420.2 110.4 L417.4 113.0 L414.7 115.7 L412.0 118.4 L409.3 121.1 L406.6 123.8 L404.0 126.5 L401.4 129.3 L398.8 132.1 L396.3 134.9 L393.7 137.8 L391.2 140.6 L388.7 143.5 L386.3 146.4 L383.9 149.3 L381.5 152.3 L379.1 155.3 L376.7 158.3 L374.4 161.3 L372.1 164.3 L369.9 167.4 L367.6 170.5 L365.4 173.6 L363.2 176.7 L361.1 179.8 L359.0 183.0 L356.9 186.2 L354.8 189.4 L352.8 192.6 L350.8 195.8 L348.8 199.1 L346.8 202.3 L344.9 205.6 L343.0 208.9 L341.2 212.2 L339.3 215.6 L337.5 218.9 L335.8 222.3" stroke-dasharray="3 1.5 1 1.5"/><path d="M286.6 396.0 L286.3 399.6 L286.1 403.1 L286.0 406.7 L285.8 410.2 L285.7 413.8 L285.7 417.3 L285.6 420.9 L285.7 424.4 L285.7 428.0 L285.8 431.5 L285.9 435.1 L286.1 438.6 L286.3 442.2 L286.5 445.7 L286.8 449.3 L287.1 452.8 L287.4 456.3 L287.8 459.9 L288.2 463.4 L288.6 466.9 L289.1 470.5 L289.6 474.0 L290.2 477.5 L290.8 481.0 L291.4 484.5 L292.1 488.0 L292.8 491.5 L293.5 494.9 L294.3 498.4 L295.1 501.9 L295.9 505.3 L296.8 508.7 L297.7 512.2 L298.6 515.6 L299.6 519.0 L300.6 522.4 L301.7 525.8 L302.8 529.2 L303.9 532.6" stroke-dasharray="3 1.5 1 1.5"/><path d="M462.1 106.1 L458.7 108.4 L455.4 110.8 L452.2 113.2 L448.9 115.6 L445.7 118.1 L442.6 120.6 L439.4 123.2 L436.3 125.8 L433.2 128.4 L430.2 131.1 L427.1 133.8 L424.1 136.5 L421.2 139.3 L418.3 142.1 L415.4 144.9 L412.5 147.8 L409.7 150.7 L406.9 153.7 L404.1 156.6 L401.4 159.6 L398.7 162.7 L396.1 165.7 L393.4 168.8 L390.9 172.0 L388.3 175.1 L385.8 178.3 L383.3 181.5 L380.9 184.8 L378.5 188.1 L376.2 191.4 L373.9 194.7 L371.6 198.1 L369.4 201.4 L367.2 204.8 L365.0 208.3 L362.9 211.7 L360.8 215.2 L358.8 218.7 L356.8 222.3"/><path d="M306.6 395.9 L306.7 399.7 L306.9 403.5 L307.2 407.2 L307.6 411.0 L308.0 414.7 L308.4 418.5 L309.0 422.2 L309.6 425.9 L310.2 429.6 L310.9 433.3 L311.7 437.0 L312.6 440.7 L313.5 444.3 L314.4 448.0 L315.5 451.6 L316.6 455.2 L317.7 458.8 L318.9 462.4 L320.2 465.9 L321.5 469.4 L322.9 472.9 L324.3 476.4 L325.8 479.9 L327.4 483.3 L329.0 486.7 L330.7 490.1 L332.4 493.4 L334.2 496.7 L336.0 500.0 L337.9 503.3 L339.9 506.5 L341.9 509.7 L343.9 512.9 L346.0 516.0 L348.2 519.1 L350.4 522.1 L352.7 525.1 L355.0 528.1 L357.3 531.0"/><path d="M474.0 106.5 L470.6 108.7 L467.2 110.9 L463.9 113.2 L460.5 115.5 L457.2 117.9 L454.0 120.3 L450.7 122.8 L447.5 125.3 L444.4 127.9 L441.3 130.5 L438.2 133.1 L435.1 135.8 L432.1 138.5 L429.1 141.3 L426.2 144.1 L423.3 147.0 L420.4 149.9 L417.6 152.8 L414.9 155.8 L412.1 158.8 L409.4 161.8 L406.8 164.9 L404.2 168.0 L401.6 171.2 L399.1 174.4 L396.6 177.6 L394.2 180.8 L391.8 184.1 L389.5 187.5 L387.2 190.8 L384.9 194.2 L382.7 197.6 L380.6 201.1 L378.5 204.6 L376.4 208.1 L374.4 211.6 L372.4 215.2 L370.5 218.8 L368.7 222.4"/><path d="M325.8 395.9 L326.0 399.7 L326.2 403.4 L326.4 407.1 L326.8 410.9 L327.1 414.6 L327.6 418.3 L328.1 422.0 L328.7 425.7 L329.3 429.4 L330.0 433.1 L330.7 436.8 L331.5 440.4 L332.4 444.1 L333.3 447.7 L334.3 451.3 L335.3 454.9 L336.4 458.5 L337.5 462.1 L338.8 465.6 L340.0 469.2 L341.3 472.7 L342.7 476.1 L344.2 479.6 L345.7 483.0 L347.2 486.4 L348.8 489.8 L350.5 493.2 L352.2 496.5 L353.9 499.8 L355.7 503.1 L357.6 506.3 L359.5 509.6 L361.5 512.7 L363.5 515.9 L365.6 519.0 L367.7 522.1 L369.9 525.1 L372.1 528.2 L374.4 531.1"/><path d="M481.8 106.7 L478.3 108.9 L474.9 111.1 L471.5 113.3 L468.2 115.6 L464.8 118.0 L461.5 120.4 L458.3 122.8 L455.0 125.3 L451.9 127.9 L448.7 130.4 L445.6 133.1 L442.5 135.7 L439.5 138.4 L436.5 141.2 L433.5 144.0 L430.6 146.8 L427.7 149.7 L424.9 152.7 L422.1 155.6 L419.3 158.6 L416.6 161.7 L413.9 164.7 L411.3 167.9 L408.7 171.0 L406.2 174.2 L403.7 177.4 L401.3 180.7 L398.9 184.0 L396.5 187.3 L394.2 190.7 L392.0 194.1 L389.8 197.5 L387.6 201.0 L385.5 204.5 L383.5 208.0 L381.5 211.5 L379.5 215.1 L377.6 218.7 L375.8 222.4"/><path d="M334.1 395.9 L334.3 399.7 L334.6 403.4 L334.9 407.2 L335.3 411.0 L335.8 414.7 L336.3 418.5 L336.9 422.2 L337.6 425.9 L338.3 429.6 L339.0 433.3 L339.9 437.0 L340.8 440.7 L341.7 444.3 L342.7 448.0 L343.8 451.6 L344.9 455.2 L346.1 458.8 L347.4 462.3 L348.7 465.9 L350.1 469.4 L351.5 472.9 L353.0 476.4 L354.5 479.8 L356.1 483.3 L357.8 486.7 L359.5 490.0 L361.2 493.4 L363.0 496.7 L364.9 500.0 L366.8 503.2 L368.8 506.4 L370.8 509.6 L372.9 512.8 L375.1 515.9 L377.3 519.0 L379.5 522.0 L381.8 525.0 L384.1 528.0 L386.5 530.9"/><path d="M504.9 107.0 L501.2 109.1 L497.5 111.2 L493.9 113.4 L490.2 115.7 L486.7 117.9 L483.1 120.3 L479.6 122.7 L476.1 125.1 L472.7 127.6 L469.3 130.1 L465.9 132.7 L462.6 135.4 L459.3 138.0 L456.0 140.8 L452.8 143.5 L449.6 146.3 L446.5 149.2 L443.4 152.1 L440.4 155.0 L437.3 158.0 L434.4 161.1 L431.4 164.1 L428.5 167.3 L425.7 170.4 L422.9 173.6 L420.2 176.8 L417.4 180.1 L414.8 183.4 L412.2 186.8 L409.6 190.1 L407.1 193.6 L404.6 197.0 L402.2 200.5 L399.8 204.0 L397.5 207.6 L395.2 211.2 L393.0 214.8 L390.8 218.4 L388.7 222.1"/><path d="M343.0 395.9 L343.2 399.8 L343.4 403.6 L343.7 407.4 L344.0 411.3 L344.5 415.1 L345.0 418.9 L345.6 422.7 L346.3 426.5 L347.0 430.3 L347.8 434.0 L348.7 437.8 L349.7 441.5 L350.7 445.2 L351.8 448.9 L353.0 452.6 L354.2 456.2 L355.5 459.8 L356.9 463.4 L358.4 467.0 L359.9 470.5 L361.5 474.0 L363.2 477.5 L364.9 480.9 L366.7 484.3 L368.6 487.7 L370.5 491.0 L372.5 494.3 L374.5 497.6 L376.7 500.8 L378.8 503.9 L381.1 507.1 L383.4 510.2 L385.7 513.2 L388.2 516.2 L390.6 519.1 L393.2 522.0 L395.8 524.9 L398.4 527.7 L401.1 530.4"/><path d="M515.5 107.2 L511.7 109.2 L508.0 111.3 L504.2 113.4 L500.5 115.6 L496.9 117.8 L493.2 120.1 L489.7 122.4 L486.1 124.8 L482.6 127.3 L479.1 129.7 L475.7 132.3 L472.3 134.9 L468.9 137.5 L465.6 140.2 L462.3 143.0 L459.0 145.8 L455.8 148.6 L452.7 151.5 L449.6 154.5 L446.5 157.5 L443.5 160.5 L440.5 163.6 L437.6 166.7 L434.7 169.9 L431.9 173.1 L429.1 176.3 L426.4 179.6 L423.7 183.0 L421.0 186.4 L418.5 189.8 L415.9 193.2 L413.4 196.7 L411.0 200.3 L408.7 203.8 L406.3 207.4 L404.1 211.1 L401.9 214.7 L399.7 218.4 L397.6 222.2" stroke-dasharray="3 2"/><path d="M350.3 395.9 L350.7 399.7 L351.0 403.6 L351.5 407.4 L352.0 411.2 L352.6 415.0 L353.2 418.8 L354.0 422.6 L354.7 426.3 L355.6 430.1 L356.5 433.8 L357.5 437.5 L358.5 441.2 L359.6 444.9 L360.8 448.6 L362.0 452.2 L363.3 455.9 L364.7 459.5 L366.1 463.0 L367.6 466.6 L369.1 470.1 L370.7 473.6 L372.4 477.1 L374.1 480.5 L375.9 483.9 L377.8 487.3 L379.7 490.6 L381.6 493.9 L383.7 497.2 L385.7 500.4 L387.9 503.6 L390.1 506.8 L392.3 509.9 L394.6 513.0 L397.0 516.0 L399.4 519.0 L401.8 522.0 L404.3 524.9 L406.9 527.8 L409.5 530.6" stroke-dasharray="3 2"/><path d="M537.9 107.5 L534.0 109.5 L530.0 111.5 L526.1 113.5 L522.3 115.6 L518.4 117.8 L514.6 120.0 L510.8 122.3 L507.1 124.7 L503.4 127.1 L499.7 129.5 L496.1 132.0 L492.5 134.6 L488.9 137.2 L485.4 139.9 L482.0 142.6 L478.5 145.4 L475.1 148.2 L471.8 151.1 L468.5 154.0 L465.2 157.0 L462.0 160.0 L458.8 163.1 L455.7 166.2 L452.6 169.4 L449.6 172.6 L446.6 175.9 L443.7 179.2 L440.8 182.5 L438.0 185.9 L435.2 189.4 L432.5 192.8 L429.8 196.3 L427.2 199.9 L424.6 203.5 L422.1 207.1 L419.7 210.8 L417.3 214.5 L414.9 218.2 L412.6 222.0"/><path d="M365.4 395.9 L365.6 399.8 L366.0 403.7 L366.4 407.5 L366.9 411.4 L367.5 415.3 L368.1 419.1 L368.8 422.9 L369.6 426.7 L370.5 430.5 L371.4 434.3 L372.4 438.1 L373.5 441.8 L374.6 445.5 L375.9 449.2 L377.2 452.9 L378.5 456.6 L380.0 460.2 L381.5 463.8 L383.0 467.3 L384.7 470.8 L386.4 474.3 L388.2 477.8 L390.0 481.2 L392.0 484.6 L393.9 488.0 L396.0 491.3 L398.1 494.6 L400.3 497.8 L402.5 501.0 L404.8 504.1 L407.2 507.2 L409.6 510.3 L412.1 513.3 L414.6 516.2 L417.2 519.1 L419.8 522.0 L422.5 524.8 L425.3 527.5 L428.1 530.2"/><path d="M313.7 111.5A380.4 380.4 0 0 0 213.7 523.5"/><path d="M326.7 111.5A390.1 390.1 0 0 0 233 523.5"/><path d="M339.3 111.5A385.7 385.7 0 0 0 243.1 523.5"/><path d="M850 109Q905 125 960 150"/><path d="M886 109Q922 121 960 139" stroke-dasharray="3 2"/><path d="M904 109Q932 118 960 132"/><path d="M957 407Q900 455 828 530"/><path d="M957 423Q905 465 843 530" stroke-dasharray="3 2"/><path d="M957 432Q912 470 853 530"/><path d="M957 438Q918 474 863 530"/><path d="M957 448Q925 480 874 530"/><path d="M957 470Q935 492 892 530"/></g><rect x="266.8" y="213.7" width="220.6" height="30.1" fill="#F41A00"/><path d="M266.8 248.1H487.4V405.8H386.8L377.4 421.6L367.4 405.8H266.8Z" fill="#F41A00"/></g>
<text x="299.43" y="318.4" font-size="25" font-family="Liberation Sans" font-weight="normal" fill="#fff" textLength="155.86" lengthAdjust="spacingAndGlyphs" stroke="#F41A00" stroke-width="0.4" xml:space="preserve">Pictures of Ice</text>
<text x="341.69" y="349.2" font-size="25" font-family="Liberation Sans" font-weight="normal" fill="#fff" textLength="70.45" lengthAdjust="spacingAndGlyphs" stroke="#F41A00" stroke-width="0.4" xml:space="preserve">cream</text>
<rect x="525.9" y="159.8" width="378" height="316" fill="none" stroke="#9A9A9A" stroke-width="0.75" stroke-dasharray="1.6 1"/>
<rect x="532.8" y="316" width="4.5" height="4.8" fill="#F01A00"/>
<text x="545.50" y="323.5" font-size="14" font-family="Liberation Serif" font-weight="normal" fill="#222222" textLength="103.48" lengthAdjust="spacingAndGlyphs" stroke="#222222" stroke-width="0.35" xml:space="preserve">Click to add text</text>
<g opacity="0.55"><rect x="671.2" y="298.2" width="14.6" height="14" fill="#fff" stroke="#888" stroke-width="0.8"/><rect x="671.2" y="298.2" width="14.6" height="2.2" fill="#888"/><path d="M671.2 304H685.8M671.2 307.6H685.8M676 300.4V312.2M681 300.4V312.2" stroke="#aaa" stroke-width="0.6"/><rect x="696" y="303" width="3.6" height="9.5" fill="#5B8FD0"/><rect x="700.3" y="298.5" width="3.6" height="14" fill="#EDC26C"/><rect x="704.5" y="301.3" width="3.4" height="11.2" fill="#888"/><path d="M719 299H728.5L731 302.5L728.5 306H719L721.3 302.5Z" fill="#6EA98A"/><rect x="723.5" y="303.5" width="11" height="8.5" fill="#fff" stroke="#999" stroke-width="0.8"/><path d="M725.5 306.5H733M725.5 309H733" stroke="#aaa" stroke-width="0.6"/><path d="M750 297.5L756.5 301V308L750 311.5L743.5 308V301Z" fill="#fff" stroke="#777" stroke-width="0.8"/><path d="M743.5 301L750 304.5L756.5 301M750 304.5V311.5" fill="none" stroke="#777" stroke-width="0.8"/><circle cx="755" cy="309" r="4" fill="#fff" stroke="#3E79BD" stroke-width="1"/><path d="M753 307.5V310.5M757 307.5V310.5" stroke="#3E79BD" stroke-width="0.8"/><rect x="671.2" y="321.8" width="14.6" height="14.6" fill="#fff" stroke="#999" stroke-width="0.8"/><path d="M672 336L677 330L681 334V336Z" fill="#C5D6EC"/><circle cx="682" cy="325" r="1.3" fill="#EDC26C"/><rect x="678.5" y="329.5" width="8.8" height="6" fill="#fff" stroke="#3E79BD" stroke-width="0.9"/><path d="M681.5 337.5H684.5" stroke="#3E79BD" stroke-width="0.9"/><rect x="695.3" y="321.8" width="14.6" height="14.6" fill="#fff" stroke="#999" stroke-width="0.8"/><path d="M696 336L701 330L705 334V336Z" fill="#C5D6EC"/><circle cx="706" cy="325" r="1.3" fill="#EDC26C"/><circle cx="707" cy="333.5" r="3.6" fill="#fff" stroke="#3E79BD" stroke-width="0.9"/><path d="M705 333.5H709M707 331V336" stroke="#3E79BD" stroke-width="0.6"/><rect x="720.5" y="323.5" width="12.8" height="12.5" fill="#fff" stroke="#777" stroke-width="0.7"/><path d="M720.5 325.3H733.3M720.5 334.2H733.3" stroke="#777" stroke-width="0.7"/><path d="M721.8 323.9V324.9M723.8 323.9V324.9M725.8 323.9V324.9M727.8 323.9V324.9M729.8 323.9V324.9M731.8 323.9V324.9M721.8 334.6V335.6M723.8 334.6V335.6M725.8 334.6V335.6M727.8 334.6V335.6M729.8 334.6V335.6M731.8 334.6V335.6" stroke="#777" stroke-width="0.9"/><path d="M743.5 326.5C745.5 328.5 748 328.5 750 328C749.5 326.5 750 324 752.5 323.5C752.5 322.3 753.5 321.3 755 321.3C756.3 321.3 757 322 757.3 323L759 324L757 324.8C757 328 755 330 752 331C749 332 745 331 743.5 326.5Z" fill="#5B8FD0"/><path d="M749 336.5C748.6 333.5 750 331 753.3 330.3C755 330 756.4 329.6 757.8 328.6C757.8 331.6 757 334.3 754.7 335.5C753 336.3 751 336.3 749 336.5Z" fill="#fff" stroke="#888" stroke-width="0.8"/></g>
<text x="678.40" y="492.5" font-size="16.5" font-family="Liberation Sans" font-weight="normal" fill="#1E1E1E" textLength="157.53" lengthAdjust="spacingAndGlyphs" stroke="#1E1E1E" stroke-width="0.3" xml:space="preserve">developerpublish.com</text>
<text x="8.80" y="123.6" font-size="8.6" font-family="Liberation Sans" font-weight="normal" fill="#666666" textLength="3.44" lengthAdjust="spacingAndGlyphs" xml:space="preserve">1</text>
<text x="7.90" y="203" font-size="8.6" font-family="Liberation Sans" font-weight="normal" fill="#C8462A" textLength="4.97" lengthAdjust="spacingAndGlyphs" stroke="#C8462A" stroke-width="0.05" xml:space="preserve">2</text>
<text x="8.00" y="282.5" font-size="8.6" font-family="Liberation Sans" font-weight="normal" fill="#666666" textLength="4.59" lengthAdjust="spacingAndGlyphs" xml:space="preserve">3</text>
<rect x="23" y="116.8" width="116.8" height="66.5" fill="#D0D0D0"/><rect x="23.7" y="117.5" width="115.4" height="65.1" fill="#fff"/>
<clipPath id="t1c"><rect x="23.7" y="117.5" width="115.4" height="65.1"/></clipPath>
<g clip-path="url(#t1c)"><g fill="none" stroke="#D6D6D6" stroke-width="0.45"><ellipse cx="81" cy="156" rx="40" ry="24"/><ellipse cx="81" cy="156" rx="46" ry="27.5"/><ellipse cx="81" cy="156" rx="49.5" ry="30.5"/><ellipse cx="81" cy="156" rx="51.5" ry="33"/><ellipse cx="81" cy="156" rx="53.5" ry="36"/><ellipse cx="81" cy="156" rx="55.5" ry="38.5"/><ellipse cx="81" cy="156" rx="61" ry="43"/><ellipse cx="81" cy="156" rx="67" ry="47"/></g><path d="M40.1 128.9H122.9V167.9H83.2L81.5 171L79.8 167.9H40.1Z" fill="#F41A00"/><rect x="40.1" y="135.8" width="82.8" height="0.7" fill="#fff" opacity="0.9"/></g>
<text x="63.70" y="152.5" font-size="6.2" font-family="Liberation Sans" font-weight="normal" fill="#fff" textLength="36.01" lengthAdjust="spacingAndGlyphs" xml:space="preserve">Insert a picture</text>
<rect x="21.8" y="195.1" width="119.5" height="69.2" fill="#7B1D1F"/>
<rect x="23.7" y="197.2" width="115.4" height="65.1" fill="#fff"/>
<clipPath id="tc197"><rect x="23.7" y="197.2" width="115.4" height="65.1"/></clipPath>
<g clip-path="url(#tc197)"><g transform="translate(23.7 197.2) scale(0.15765) translate(-219 -111.5)"><g fill="none" stroke="#C8C8C8" stroke-width="0.5"><path vector-effect="non-scaling-stroke" d="M419.6 105.5 L416.7 108.0 L413.7 110.6 L410.8 113.1 L408.0 115.7 L405.1 118.4 L402.3 121.0 L399.5 123.7 L396.7 126.4 L394.0 129.1 L391.3 131.9 L388.6 134.7 L385.9 137.5 L383.3 140.3 L380.7 143.2 L378.1 146.1 L375.5 149.0 L373.0 151.9 L370.5 154.9 L368.1 157.9 L365.6 160.9 L363.2 163.9 L360.8 167.0 L358.5 170.1 L356.2 173.2 L353.9 176.3 L351.6 179.4 L349.4 182.6 L347.2 185.8 L345.0 189.0 L342.9 192.3 L340.8 195.5 L338.7 198.8 L336.7 202.1 L334.7 205.4 L332.7 208.7 L330.8 212.1 L328.9 215.4 L327.0 218.8 L325.1 222.2" stroke-dasharray="3 2"/><path vector-effect="non-scaling-stroke" d="M270.3 396.0 L270.1 399.6 L270.0 403.1 L270.0 406.7 L269.9 410.2 L270.0 413.8 L270.0 417.3 L270.1 420.9 L270.2 424.5 L270.3 428.0 L270.5 431.6 L270.7 435.1 L270.9 438.7 L271.2 442.2 L271.5 445.8 L271.8 449.3 L272.2 452.8 L272.6 456.4 L273.1 459.9 L273.5 463.4 L274.0 467.0 L274.6 470.5 L275.2 474.0 L275.8 477.5 L276.4 481.0 L277.1 484.5 L277.8 488.0 L278.5 491.4 L279.3 494.9 L280.1 498.4 L280.9 501.8 L281.8 505.3 L282.7 508.7 L283.6 512.2 L284.6 515.6 L285.6 519.0 L286.6 522.4 L287.7 525.8 L288.8 529.2 L289.9 532.6" stroke-dasharray="3 2"/><path vector-effect="non-scaling-stroke" d="M425.8 105.2 L423.0 107.8 L420.2 110.4 L417.4 113.0 L414.7 115.7 L412.0 118.4 L409.3 121.1 L406.6 123.8 L404.0 126.5 L401.4 129.3 L398.8 132.1 L396.3 134.9 L393.7 137.8 L391.2 140.6 L388.7 143.5 L386.3 146.4 L383.9 149.3 L381.5 152.3 L379.1 155.3 L376.7 158.3 L374.4 161.3 L372.1 164.3 L369.9 167.4 L367.6 170.5 L365.4 173.6 L363.2 176.7 L361.1 179.8 L359.0 183.0 L356.9 186.2 L354.8 189.4 L352.8 192.6 L350.8 195.8 L348.8 199.1 L346.8 202.3 L344.9 205.6 L343.0 208.9 L341.2 212.2 L339.3 215.6 L337.5 218.9 L335.8 222.3" stroke-dasharray="3 1.5 1 1.5"/><path vector-effect="non-scaling-stroke" d="M286.6 396.0 L286.3 399.6 L286.1 403.1 L286.0 406.7 L285.8 410.2 L285.7 413.8 L285.7 417.3 L285.6 420.9 L285.7 424.4 L285.7 428.0 L285.8 431.5 L285.9 435.1 L286.1 438.6 L286.3 442.2 L286.5 445.7 L286.8 449.3 L287.1 452.8 L287.4 456.3 L287.8 459.9 L288.2 463.4 L288.6 466.9 L289.1 470.5 L289.6 474.0 L290.2 477.5 L290.8 481.0 L291.4 484.5 L292.1 488.0 L292.8 491.5 L293.5 494.9 L294.3 498.4 L295.1 501.9 L295.9 505.3 L296.8 508.7 L297.7 512.2 L298.6 515.6 L299.6 519.0 L300.6 522.4 L301.7 525.8 L302.8 529.2 L303.9 532.6" stroke-dasharray="3 1.5 1 1.5"/><path vector-effect="non-scaling-stroke" d="M462.1 106.1 L458.7 108.4 L455.4 110.8 L452.2 113.2 L448.9 115.6 L445.7 118.1 L442.6 120.6 L439.4 123.2 L436.3 125.8 L433.2 128.4 L430.2 131.1 L427.1 133.8 L424.1 136.5 L421.2 139.3 L418.3 142.1 L415.4 144.9 L412.5 147.8 L409.7 150.7 L406.9 153.7 L404.1 156.6 L401.4 159.6 L398.7 162.7 L396.1 165.7 L393.4 168.8 L390.9 172.0 L388.3 175.1 L385.8 178.3 L383.3 181.5 L380.9 184.8 L378.5 188.1 L376.2 191.4 L373.9 194.7 L371.6 198.1 L369.4 201.4 L367.2 204.8 L365.0 208.3 L362.9 211.7 L360.8 215.2 L358.8 218.7 L356.8 222.3"/><path vector-effect="non-scaling-stroke" d="M306.6 395.9 L306.7 399.7 L306.9 403.5 L307.2 407.2 L307.6 411.0 L308.0 414.7 L308.4 418.5 L309.0 422.2 L309.6 425.9 L310.2 429.6 L310.9 433.3 L311.7 437.0 L312.6 440.7 L313.5 444.3 L314.4 448.0 L315.5 451.6 L316.6 455.2 L317.7 458.8 L318.9 462.4 L320.2 465.9 L321.5 469.4 L322.9 472.9 L324.3 476.4 L325.8 479.9 L327.4 483.3 L329.0 486.7 L330.7 490.1 L332.4 493.4 L334.2 496.7 L336.0 500.0 L337.9 503.3 L339.9 506.5 L341.9 509.7 L343.9 512.9 L346.0 516.0 L348.2 519.1 L350.4 522.1 L352.7 525.1 L355.0 528.1 L357.3 531.0"/><path vector-effect="non-scaling-stroke" d="M474.0 106.5 L470.6 108.7 L467.2 110.9 L463.9 113.2 L460.5 115.5 L457.2 117.9 L454.0 120.3 L450.7 122.8 L447.5 125.3 L444.4 127.9 L441.3 130.5 L438.2 133.1 L435.1 135.8 L432.1 138.5 L429.1 141.3 L426.2 144.1 L423.3 147.0 L420.4 149.9 L417.6 152.8 L414.9 155.8 L412.1 158.8 L409.4 161.8 L406.8 164.9 L404.2 168.0 L401.6 171.2 L399.1 174.4 L396.6 177.6 L394.2 180.8 L391.8 184.1 L389.5 187.5 L387.2 190.8 L384.9 194.2 L382.7 197.6 L380.6 201.1 L378.5 204.6 L376.4 208.1 L374.4 211.6 L372.4 215.2 L370.5 218.8 L368.7 222.4"/><path vector-effect="non-scaling-stroke" d="M325.8 395.9 L326.0 399.7 L326.2 403.4 L326.4 407.1 L326.8 410.9 L327.1 414.6 L327.6 418.3 L328.1 422.0 L328.7 425.7 L329.3 429.4 L330.0 433.1 L330.7 436.8 L331.5 440.4 L332.4 444.1 L333.3 447.7 L334.3 451.3 L335.3 454.9 L336.4 458.5 L337.5 462.1 L338.8 465.6 L340.0 469.2 L341.3 472.7 L342.7 476.1 L344.2 479.6 L345.7 483.0 L347.2 486.4 L348.8 489.8 L350.5 493.2 L352.2 496.5 L353.9 499.8 L355.7 503.1 L357.6 506.3 L359.5 509.6 L361.5 512.7 L363.5 515.9 L365.6 519.0 L367.7 522.1 L369.9 525.1 L372.1 528.2 L374.4 531.1"/><path vector-effect="non-scaling-stroke" d="M481.8 106.7 L478.3 108.9 L474.9 111.1 L471.5 113.3 L468.2 115.6 L464.8 118.0 L461.5 120.4 L458.3 122.8 L455.0 125.3 L451.9 127.9 L448.7 130.4 L445.6 133.1 L442.5 135.7 L439.5 138.4 L436.5 141.2 L433.5 144.0 L430.6 146.8 L427.7 149.7 L424.9 152.7 L422.1 155.6 L419.3 158.6 L416.6 161.7 L413.9 164.7 L411.3 167.9 L408.7 171.0 L406.2 174.2 L403.7 177.4 L401.3 180.7 L398.9 184.0 L396.5 187.3 L394.2 190.7 L392.0 194.1 L389.8 197.5 L387.6 201.0 L385.5 204.5 L383.5 208.0 L381.5 211.5 L379.5 215.1 L377.6 218.7 L375.8 222.4"/><path vector-effect="non-scaling-stroke" d="M334.1 395.9 L334.3 399.7 L334.6 403.4 L334.9 407.2 L335.3 411.0 L335.8 414.7 L336.3 418.5 L336.9 422.2 L337.6 425.9 L338.3 429.6 L339.0 433.3 L339.9 437.0 L340.8 440.7 L341.7 444.3 L342.7 448.0 L343.8 451.6 L344.9 455.2 L346.1 458.8 L347.4 462.3 L348.7 465.9 L350.1 469.4 L351.5 472.9 L353.0 476.4 L354.5 479.8 L356.1 483.3 L357.8 486.7 L359.5 490.0 L361.2 493.4 L363.0 496.7 L364.9 500.0 L366.8 503.2 L368.8 506.4 L370.8 509.6 L372.9 512.8 L375.1 515.9 L377.3 519.0 L379.5 522.0 L381.8 525.0 L384.1 528.0 L386.5 530.9"/><path vector-effect="non-scaling-stroke" d="M504.9 107.0 L501.2 109.1 L497.5 111.2 L493.9 113.4 L490.2 115.7 L486.7 117.9 L483.1 120.3 L479.6 122.7 L476.1 125.1 L472.7 127.6 L469.3 130.1 L465.9 132.7 L462.6 135.4 L459.3 138.0 L456.0 140.8 L452.8 143.5 L449.6 146.3 L446.5 149.2 L443.4 152.1 L440.4 155.0 L437.3 158.0 L434.4 161.1 L431.4 164.1 L428.5 167.3 L425.7 170.4 L422.9 173.6 L420.2 176.8 L417.4 180.1 L414.8 183.4 L412.2 186.8 L409.6 190.1 L407.1 193.6 L404.6 197.0 L402.2 200.5 L399.8 204.0 L397.5 207.6 L395.2 211.2 L393.0 214.8 L390.8 218.4 L388.7 222.1"/><path vector-effect="non-scaling-stroke" d="M343.0 395.9 L343.2 399.8 L343.4 403.6 L343.7 407.4 L344.0 411.3 L344.5 415.1 L345.0 418.9 L345.6 422.7 L346.3 426.5 L347.0 430.3 L347.8 434.0 L348.7 437.8 L349.7 441.5 L350.7 445.2 L351.8 448.9 L353.0 452.6 L354.2 456.2 L355.5 459.8 L356.9 463.4 L358.4 467.0 L359.9 470.5 L361.5 474.0 L363.2 477.5 L364.9 480.9 L366.7 484.3 L368.6 487.7 L370.5 491.0 L372.5 494.3 L374.5 497.6 L376.7 500.8 L378.8 503.9 L381.1 507.1 L383.4 510.2 L385.7 513.2 L388.2 516.2 L390.6 519.1 L393.2 522.0 L395.8 524.9 L398.4 527.7 L401.1 530.4"/><path vector-effect="non-scaling-stroke" d="M515.5 107.2 L511.7 109.2 L508.0 111.3 L504.2 113.4 L500.5 115.6 L496.9 117.8 L493.2 120.1 L489.7 122.4 L486.1 124.8 L482.6 127.3 L479.1 129.7 L475.7 132.3 L472.3 134.9 L468.9 137.5 L465.6 140.2 L462.3 143.0 L459.0 145.8 L455.8 148.6 L452.7 151.5 L449.6 154.5 L446.5 157.5 L443.5 160.5 L440.5 163.6 L437.6 166.7 L434.7 169.9 L431.9 173.1 L429.1 176.3 L426.4 179.6 L423.7 183.0 L421.0 186.4 L418.5 189.8 L415.9 193.2 L413.4 196.7 L411.0 200.3 L408.7 203.8 L406.3 207.4 L404.1 211.1 L401.9 214.7 L399.7 218.4 L397.6 222.2" stroke-dasharray="3 2"/><path vector-effect="non-scaling-stroke" d="M350.3 395.9 L350.7 399.7 L351.0 403.6 L351.5 407.4 L352.0 411.2 L352.6 415.0 L353.2 418.8 L354.0 422.6 L354.7 426.3 L355.6 430.1 L356.5 433.8 L357.5 437.5 L358.5 441.2 L359.6 444.9 L360.8 448.6 L362.0 452.2 L363.3 455.9 L364.7 459.5 L366.1 463.0 L367.6 466.6 L369.1 470.1 L370.7 473.6 L372.4 477.1 L374.1 480.5 L375.9 483.9 L377.8 487.3 L379.7 490.6 L381.6 493.9 L383.7 497.2 L385.7 500.4 L387.9 503.6 L390.1 506.8 L392.3 509.9 L394.6 513.0 L397.0 516.0 L399.4 519.0 L401.8 522.0 L404.3 524.9 L406.9 527.8 L409.5 530.6" stroke-dasharray="3 2"/><path vector-effect="non-scaling-stroke" d="M537.9 107.5 L534.0 109.5 L530.0 111.5 L526.1 113.5 L522.3 115.6 L518.4 117.8 L514.6 120.0 L510.8 122.3 L507.1 124.7 L503.4 127.1 L499.7 129.5 L496.1 132.0 L492.5 134.6 L488.9 137.2 L485.4 139.9 L482.0 142.6 L478.5 145.4 L475.1 148.2 L471.8 151.1 L468.5 154.0 L465.2 157.0 L462.0 160.0 L458.8 163.1 L455.7 166.2 L452.6 169.4 L449.6 172.6 L446.6 175.9 L443.7 179.2 L440.8 182.5 L438.0 185.9 L435.2 189.4 L432.5 192.8 L429.8 196.3 L427.2 199.9 L424.6 203.5 L422.1 207.1 L419.7 210.8 L417.3 214.5 L414.9 218.2 L412.6 222.0"/><path vector-effect="non-scaling-stroke" d="M365.4 395.9 L365.6 399.8 L366.0 403.7 L366.4 407.5 L366.9 411.4 L367.5 415.3 L368.1 419.1 L368.8 422.9 L369.6 426.7 L370.5 430.5 L371.4 434.3 L372.4 438.1 L373.5 441.8 L374.6 445.5 L375.9 449.2 L377.2 452.9 L378.5 456.6 L380.0 460.2 L381.5 463.8 L383.0 467.3 L384.7 470.8 L386.4 474.3 L388.2 477.8 L390.0 481.2 L392.0 484.6 L393.9 488.0 L396.0 491.3 L398.1 494.6 L400.3 497.8 L402.5 501.0 L404.8 504.1 L407.2 507.2 L409.6 510.3 L412.1 513.3 L414.6 516.2 L417.2 519.1 L419.8 522.0 L422.5 524.8 L425.3 527.5 L428.1 530.2"/><path vector-effect="non-scaling-stroke" d="M313.7 111.5A380.4 380.4 0 0 0 213.7 523.5"/><path vector-effect="non-scaling-stroke" d="M326.7 111.5A390.1 390.1 0 0 0 233 523.5"/><path vector-effect="non-scaling-stroke" d="M339.3 111.5A385.7 385.7 0 0 0 243.1 523.5"/><path vector-effect="non-scaling-stroke" d="M850 109Q905 125 960 150"/><path vector-effect="non-scaling-stroke" d="M886 109Q922 121 960 139" stroke-dasharray="3 2"/><path vector-effect="non-scaling-stroke" d="M904 109Q932 118 960 132"/><path vector-effect="non-scaling-stroke" d="M957 407Q900 455 828 530"/><path vector-effect="non-scaling-stroke" d="M957 423Q905 465 843 530" stroke-dasharray="3 2"/><path vector-effect="non-scaling-stroke" d="M957 432Q912 470 853 530"/><path vector-effect="non-scaling-stroke" d="M957 438Q918 474 863 530"/><path vector-effect="non-scaling-stroke" d="M957 448Q925 480 874 530"/><path vector-effect="non-scaling-stroke" d="M957 470Q935 492 892 530"/></g><rect x="266.8" y="213.7" width="220.6" height="30.1" fill="#F41A00"/><path d="M266.8 248.1H487.4V405.8H386.8L377.4 421.6L367.4 405.8H266.8Z" fill="#F41A00"/></g></g>
<text x="36.00" y="229.6" font-size="4.4" font-family="Liberation Sans" font-weight="normal" fill="#fff" textLength="25.49" lengthAdjust="spacingAndGlyphs" xml:space="preserve">Pictures of Ice</text>
<text x="43.50" y="234.4" font-size="4.4" font-family="Liberation Sans" font-weight="normal" fill="#fff" textLength="10.70" lengthAdjust="spacingAndGlyphs" xml:space="preserve">cream</text>
<rect x="23" y="276.1" width="116.8" height="66.5" fill="#D0D0D0"/>
<rect x="23.7" y="276.8" width="115.4" height="65.1" fill="#fff"/>
<clipPath id="tc276"><rect x="23.7" y="276.8" width="115.4" height="65.1"/></clipPath>
<g clip-path="url(#tc276)"><g transform="translate(23.7 276.8) scale(0.15765) translate(-219 -111.5)"><g fill="none" stroke="#C8C8C8" stroke-width="0.5"><path vector-effect="non-scaling-stroke" d="M419.6 105.5 L416.7 108.0 L413.7 110.6 L410.8 113.1 L408.0 115.7 L405.1 118.4 L402.3 121.0 L399.5 123.7 L396.7 126.4 L394.0 129.1 L391.3 131.9 L388.6 134.7 L385.9 137.5 L383.3 140.3 L380.7 143.2 L378.1 146.1 L375.5 149.0 L373.0 151.9 L370.5 154.9 L368.1 157.9 L365.6 160.9 L363.2 163.9 L360.8 167.0 L358.5 170.1 L356.2 173.2 L353.9 176.3 L351.6 179.4 L349.4 182.6 L347.2 185.8 L345.0 189.0 L342.9 192.3 L340.8 195.5 L338.7 198.8 L336.7 202.1 L334.7 205.4 L332.7 208.7 L330.8 212.1 L328.9 215.4 L327.0 218.8 L325.1 222.2" stroke-dasharray="3 2"/><path vector-effect="non-scaling-stroke" d="M270.3 396.0 L270.1 399.6 L270.0 403.1 L270.0 406.7 L269.9 410.2 L270.0 413.8 L270.0 417.3 L270.1 420.9 L270.2 424.5 L270.3 428.0 L270.5 431.6 L270.7 435.1 L270.9 438.7 L271.2 442.2 L271.5 445.8 L271.8 449.3 L272.2 452.8 L272.6 456.4 L273.1 459.9 L273.5 463.4 L274.0 467.0 L274.6 470.5 L275.2 474.0 L275.8 477.5 L276.4 481.0 L277.1 484.5 L277.8 488.0 L278.5 491.4 L279.3 494.9 L280.1 498.4 L280.9 501.8 L281.8 505.3 L282.7 508.7 L283.6 512.2 L284.6 515.6 L285.6 519.0 L286.6 522.4 L287.7 525.8 L288.8 529.2 L289.9 532.6" stroke-dasharray="3 2"/><path vector-effect="non-scaling-stroke" d="M425.8 105.2 L423.0 107.8 L420.2 110.4 L417.4 113.0 L414.7 115.7 L412.0 118.4 L409.3 121.1 L406.6 123.8 L404.0 126.5 L401.4 129.3 L398.8 132.1 L396.3 134.9 L393.7 137.8 L391.2 140.6 L388.7 143.5 L386.3 146.4 L383.9 149.3 L381.5 152.3 L379.1 155.3 L376.7 158.3 L374.4 161.3 L372.1 164.3 L369.9 167.4 L367.6 170.5 L365.4 173.6 L363.2 176.7 L361.1 179.8 L359.0 183.0 L356.9 186.2 L354.8 189.4 L352.8 192.6 L350.8 195.8 L348.8 199.1 L346.8 202.3 L344.9 205.6 L343.0 208.9 L341.2 212.2 L339.3 215.6 L337.5 218.9 L335.8 222.3" stroke-dasharray="3 1.5 1 1.5"/><path vector-effect="non-scaling-stroke" d="M286.6 396.0 L286.3 399.6 L286.1 403.1 L286.0 406.7 L285.8 410.2 L285.7 413.8 L285.7 417.3 L285.6 420.9 L285.7 424.4 L285.7 428.0 L285.8 431.5 L285.9 435.1 L286.1 438.6 L286.3 442.2 L286.5 445.7 L286.8 449.3 L287.1 452.8 L287.4 456.3 L287.8 459.9 L288.2 463.4 L288.6 466.9 L289.1 470.5 L289.6 474.0 L290.2 477.5 L290.8 481.0 L291.4 484.5 L292.1 488.0 L292.8 491.5 L293.5 494.9 L294.3 498.4 L295.1 501.9 L295.9 505.3 L296.8 508.7 L297.7 512.2 L298.6 515.6 L299.6 519.0 L300.6 522.4 L301.7 525.8 L302.8 529.2 L303.9 532.6" stroke-dasharray="3 1.5 1 1.5"/><path vector-effect="non-scaling-stroke" d="M462.1 106.1 L458.7 108.4 L455.4 110.8 L452.2 113.2 L448.9 115.6 L445.7 118.1 L442.6 120.6 L439.4 123.2 L436.3 125.8 L433.2 128.4 L430.2 131.1 L427.1 133.8 L424.1 136.5 L421.2 139.3 L418.3 142.1 L415.4 144.9 L412.5 147.8 L409.7 150.7 L406.9 153.7 L404.1 156.6 L401.4 159.6 L398.7 162.7 L396.1 165.7 L393.4 168.8 L390.9 172.0 L388.3 175.1 L385.8 178.3 L383.3 181.5 L380.9 184.8 L378.5 188.1 L376.2 191.4 L373.9 194.7 L371.6 198.1 L369.4 201.4 L367.2 204.8 L365.0 208.3 L362.9 211.7 L360.8 215.2 L358.8 218.7 L356.8 222.3"/><path vector-effect="non-scaling-stroke" d="M306.6 395.9 L306.7 399.7 L306.9 403.5 L307.2 407.2 L307.6 411.0 L308.0 414.7 L308.4 418.5 L309.0 422.2 L309.6 425.9 L310.2 429.6 L310.9 433.3 L311.7 437.0 L312.6 440.7 L313.5 444.3 L314.4 448.0 L315.5 451.6 L316.6 455.2 L317.7 458.8 L318.9 462.4 L320.2 465.9 L321.5 469.4 L322.9 472.9 L324.3 476.4 L325.8 479.9 L327.4 483.3 L329.0 486.7 L330.7 490.1 L332.4 493.4 L334.2 496.7 L336.0 500.0 L337.9 503.3 L339.9 506.5 L341.9 509.7 L343.9 512.9 L346.0 516.0 L348.2 519.1 L350.4 522.1 L352.7 525.1 L355.0 528.1 L357.3 531.0"/><path vector-effect="non-scaling-stroke" d="M474.0 106.5 L470.6 108.7 L467.2 110.9 L463.9 113.2 L460.5 115.5 L457.2 117.9 L454.0 120.3 L450.7 122.8 L447.5 125.3 L444.4 127.9 L441.3 130.5 L438.2 133.1 L435.1 135.8 L432.1 138.5 L429.1 141.3 L426.2 144.1 L423.3 147.0 L420.4 149.9 L417.6 152.8 L414.9 155.8 L412.1 158.8 L409.4 161.8 L406.8 164.9 L404.2 168.0 L401.6 171.2 L399.1 174.4 L396.6 177.6 L394.2 180.8 L391.8 184.1 L389.5 187.5 L387.2 190.8 L384.9 194.2 L382.7 197.6 L380.6 201.1 L378.5 204.6 L376.4 208.1 L374.4 211.6 L372.4 215.2 L370.5 218.8 L368.7 222.4"/><path vector-effect="non-scaling-stroke" d="M325.8 395.9 L326.0 399.7 L326.2 403.4 L326.4 407.1 L326.8 410.9 L327.1 414.6 L327.6 418.3 L328.1 422.0 L328.7 425.7 L329.3 429.4 L330.0 433.1 L330.7 436.8 L331.5 440.4 L332.4 444.1 L333.3 447.7 L334.3 451.3 L335.3 454.9 L336.4 458.5 L337.5 462.1 L338.8 465.6 L340.0 469.2 L341.3 472.7 L342.7 476.1 L344.2 479.6 L345.7 483.0 L347.2 486.4 L348.8 489.8 L350.5 493.2 L352.2 496.5 L353.9 499.8 L355.7 503.1 L357.6 506.3 L359.5 509.6 L361.5 512.7 L363.5 515.9 L365.6 519.0 L367.7 522.1 L369.9 525.1 L372.1 528.2 L374.4 531.1"/><path vector-effect="non-scaling-stroke" d="M481.8 106.7 L478.3 108.9 L474.9 111.1 L471.5 113.3 L468.2 115.6 L464.8 118.0 L461.5 120.4 L458.3 122.8 L455.0 125.3 L451.9 127.9 L448.7 130.4 L445.6 133.1 L442.5 135.7 L439.5 138.4 L436.5 141.2 L433.5 144.0 L430.6 146.8 L427.7 149.7 L424.9 152.7 L422.1 155.6 L419.3 158.6 L416.6 161.7 L413.9 164.7 L411.3 167.9 L408.7 171.0 L406.2 174.2 L403.7 177.4 L401.3 180.7 L398.9 184.0 L396.5 187.3 L394.2 190.7 L392.0 194.1 L389.8 197.5 L387.6 201.0 L385.5 204.5 L383.5 208.0 L381.5 211.5 L379.5 215.1 L377.6 218.7 L375.8 222.4"/><path vector-effect="non-scaling-stroke" d="M334.1 395.9 L334.3 399.7 L334.6 403.4 L334.9 407.2 L335.3 411.0 L335.8 414.7 L336.3 418.5 L336.9 422.2 L337.6 425.9 L338.3 429.6 L339.0 433.3 L339.9 437.0 L340.8 440.7 L341.7 444.3 L342.7 448.0 L343.8 451.6 L344.9 455.2 L346.1 458.8 L347.4 462.3 L348.7 465.9 L350.1 469.4 L351.5 472.9 L353.0 476.4 L354.5 479.8 L356.1 483.3 L357.8 486.7 L359.5 490.0 L361.2 493.4 L363.0 496.7 L364.9 500.0 L366.8 503.2 L368.8 506.4 L370.8 509.6 L372.9 512.8 L375.1 515.9 L377.3 519.0 L379.5 522.0 L381.8 525.0 L384.1 528.0 L386.5 530.9"/><path vector-effect="non-scaling-stroke" d="M504.9 107.0 L501.2 109.1 L497.5 111.2 L493.9 113.4 L490.2 115.7 L486.7 117.9 L483.1 120.3 L479.6 122.7 L476.1 125.1 L472.7 127.6 L469.3 130.1 L465.9 132.7 L462.6 135.4 L459.3 138.0 L456.0 140.8 L452.8 143.5 L449.6 146.3 L446.5 149.2 L443.4 152.1 L440.4 155.0 L437.3 158.0 L434.4 161.1 L431.4 164.1 L428.5 167.3 L425.7 170.4 L422.9 173.6 L420.2 176.8 L417.4 180.1 L414.8 183.4 L412.2 186.8 L409.6 190.1 L407.1 193.6 L404.6 197.0 L402.2 200.5 L399.8 204.0 L397.5 207.6 L395.2 211.2 L393.0 214.8 L390.8 218.4 L388.7 222.1"/><path vector-effect="non-scaling-stroke" d="M343.0 395.9 L343.2 399.8 L343.4 403.6 L343.7 407.4 L344.0 411.3 L344.5 415.1 L345.0 418.9 L345.6 422.7 L346.3 426.5 L347.0 430.3 L347.8 434.0 L348.7 437.8 L349.7 441.5 L350.7 445.2 L351.8 448.9 L353.0 452.6 L354.2 456.2 L355.5 459.8 L356.9 463.4 L358.4 467.0 L359.9 470.5 L361.5 474.0 L363.2 477.5 L364.9 480.9 L366.7 484.3 L368.6 487.7 L370.5 491.0 L372.5 494.3 L374.5 497.6 L376.7 500.8 L378.8 503.9 L381.1 507.1 L383.4 510.2 L385.7 513.2 L388.2 516.2 L390.6 519.1 L393.2 522.0 L395.8 524.9 L398.4 527.7 L401.1 530.4"/><path vector-effect="non-scaling-stroke" d="M515.5 107.2 L511.7 109.2 L508.0 111.3 L504.2 113.4 L500.5 115.6 L496.9 117.8 L493.2 120.1 L489.7 122.4 L486.1 124.8 L482.6 127.3 L479.1 129.7 L475.7 132.3 L472.3 134.9 L468.9 137.5 L465.6 140.2 L462.3 143.0 L459.0 145.8 L455.8 148.6 L452.7 151.5 L449.6 154.5 L446.5 157.5 L443.5 160.5 L440.5 163.6 L437.6 166.7 L434.7 169.9 L431.9 173.1 L429.1 176.3 L426.4 179.6 L423.7 183.0 L421.0 186.4 L418.5 189.8 L415.9 193.2 L413.4 196.7 L411.0 200.3 L408.7 203.8 L406.3 207.4 L404.1 211.1 L401.9 214.7 L399.7 218.4 L397.6 222.2" stroke-dasharray="3 2"/><path vector-effect="non-scaling-stroke" d="M350.3 395.9 L350.7 399.7 L351.0 403.6 L351.5 407.4 L352.0 411.2 L352.6 415.0 L353.2 418.8 L354.0 422.6 L354.7 426.3 L355.6 430.1 L356.5 433.8 L357.5 437.5 L358.5 441.2 L359.6 444.9 L360.8 448.6 L362.0 452.2 L363.3 455.9 L364.7 459.5 L366.1 463.0 L367.6 466.6 L369.1 470.1 L370.7 473.6 L372.4 477.1 L374.1 480.5 L375.9 483.9 L377.8 487.3 L379.7 490.6 L381.6 493.9 L383.7 497.2 L385.7 500.4 L387.9 503.6 L390.1 506.8 L392.3 509.9 L394.6 513.0 L397.0 516.0 L399.4 519.0 L401.8 522.0 L404.3 524.9 L406.9 527.8 L409.5 530.6" stroke-dasharray="3 2"/><path vector-effect="non-scaling-stroke" d="M537.9 107.5 L534.0 109.5 L530.0 111.5 L526.1 113.5 L522.3 115.6 L518.4 117.8 L514.6 120.0 L510.8 122.3 L507.1 124.7 L503.4 127.1 L499.7 129.5 L496.1 132.0 L492.5 134.6 L488.9 137.2 L485.4 139.9 L482.0 142.6 L478.5 145.4 L475.1 148.2 L471.8 151.1 L468.5 154.0 L465.2 157.0 L462.0 160.0 L458.8 163.1 L455.7 166.2 L452.6 169.4 L449.6 172.6 L446.6 175.9 L443.7 179.2 L440.8 182.5 L438.0 185.9 L435.2 189.4 L432.5 192.8 L429.8 196.3 L427.2 199.9 L424.6 203.5 L422.1 207.1 L419.7 210.8 L417.3 214.5 L414.9 218.2 L412.6 222.0"/><path vector-effect="non-scaling-stroke" d="M365.4 395.9 L365.6 399.8 L366.0 403.7 L366.4 407.5 L366.9 411.4 L367.5 415.3 L368.1 419.1 L368.8 422.9 L369.6 426.7 L370.5 430.5 L371.4 434.3 L372.4 438.1 L373.5 441.8 L374.6 445.5 L375.9 449.2 L377.2 452.9 L378.5 456.6 L380.0 460.2 L381.5 463.8 L383.0 467.3 L384.7 470.8 L386.4 474.3 L388.2 477.8 L390.0 481.2 L392.0 484.6 L393.9 488.0 L396.0 491.3 L398.1 494.6 L400.3 497.8 L402.5 501.0 L404.8 504.1 L407.2 507.2 L409.6 510.3 L412.1 513.3 L414.6 516.2 L417.2 519.1 L419.8 522.0 L422.5 524.8 L425.3 527.5 L428.1 530.2"/><path vector-effect="non-scaling-stroke" d="M313.7 111.5A380.4 380.4 0 0 0 213.7 523.5"/><path vector-effect="non-scaling-stroke" d="M326.7 111.5A390.1 390.1 0 0 0 233 523.5"/><path vector-effect="non-scaling-stroke" d="M339.3 111.5A385.7 385.7 0 0 0 243.1 523.5"/><path vector-effect="non-scaling-stroke" d="M850 109Q905 125 960 150"/><path vector-effect="non-scaling-stroke" d="M886 109Q922 121 960 139" stroke-dasharray="3 2"/><path vector-effect="non-scaling-stroke" d="M904 109Q932 118 960 132"/><path vector-effect="non-scaling-stroke" d="M957 407Q900 455 828 530"/><path vector-effect="non-scaling-stroke" d="M957 423Q905 465 843 530" stroke-dasharray="3 2"/><path vector-effect="non-scaling-stroke" d="M957 432Q912 470 853 530"/><path vector-effect="non-scaling-stroke" d="M957 438Q918 474 863 530"/><path vector-effect="non-scaling-stroke" d="M957 448Q925 480 874 530"/><path vector-effect="non-scaling-stroke" d="M957 470Q935 492 892 530"/></g><rect x="266.8" y="213.7" width="220.6" height="30.1" fill="#F41A00"/><path d="M266.8 248.1H487.4V405.8H386.8L377.4 421.6L367.4 405.8H266.8Z" fill="#F41A00"/></g></g>
<text x="39.40" y="311.5" font-size="4.4" font-family="Liberation Sans" font-weight="normal" fill="#fff" textLength="19.40" lengthAdjust="spacingAndGlyphs" xml:space="preserve">Thank you!</text>
<rect x="1013.3" y="104.8" width="10.7" height="392.5" fill="#DCDCDC"/>
<rect x="1013.8" y="105.8" width="9.6" height="9.6" fill="#fff"/><path d="M1016 111.8H1021.2L1018.6 109Z" fill="#555"/>
<rect x="1013.8" y="486.8" width="9.6" height="9.6" fill="#fff"/><path d="M1016 490.2H1021.2L1018.6 493Z" fill="#555"/>
<rect x="1013.6" y="239.6" width="9.6" height="122.8" fill="#fff" stroke="#C6C6C6" stroke-width="0.8"/>
<g fill="#555"><path d="M1016.3 502.5L1018.6 500.2L1020.9 502.5ZM1016.3 505.5L1018.6 503.2L1020.9 505.5Z"/><path d="M1016 506.3H1021.2" stroke="#555" stroke-width="0.7"/><path d="M1016.3 512.2L1018.6 514.5L1020.9 512.2ZM1016.3 515.2L1018.6 517.5L1020.9 515.2Z"/><path d="M1016 511.3H1021.2" stroke="#555" stroke-width="0.7"/></g>
<rect x="0" y="533.3" width="1024" height="1" fill="#D8D8D8"/>
<rect x="0" y="534.2" width="1024" height="13.8" fill="#F3F3F3"/>
<text x="5.60" y="544.8" font-size="7.2" font-family="Liberation Sans" font-weight="normal" fill="#474747" textLength="34.40" lengthAdjust="spacingAndGlyphs" xml:space="preserve">Slide 2 of 3</text>
<g fill="none" stroke="#777" stroke-width="0.8"><path d="M53.4 538.3H57.8V545.3H53.4ZM57.8 538.3H62.2V545.3H57.8"/><path d="M58.8 541.8L60 543L62.6 539.4" stroke="#777"/></g>
<text x="73.80" y="544.8" font-size="7.2" font-family="Liberation Sans" font-weight="normal" fill="#474747" textLength="69.87" lengthAdjust="spacingAndGlyphs" xml:space="preserve">English (United States)</text>
<g fill="none" stroke="#666" stroke-width="0.8"><path d="M687.3 542.2H693.7M687.3 543.8H693.7M687.3 545.4H693.7"/><path d="M688.3 540.6L690.5 538.4L692.7 540.6" fill="#666"/></g>
<text x="697.60" y="544.8" font-size="7.2" font-family="Liberation Sans" font-weight="normal" fill="#474747" textLength="18.01" lengthAdjust="spacingAndGlyphs" xml:space="preserve">Notes</text>
<path d="M729.8 538.2H738.8V543.6H733.2L731 545.8V543.6H729.8Z" fill="#555"/>
<text x="740.60" y="544.8" font-size="7.2" font-family="Liberation Sans" font-weight="normal" fill="#474747" textLength="32.52" lengthAdjust="spacingAndGlyphs" xml:space="preserve">Comments</text>
<rect x="787.2" y="535" width="25.5" height="13" fill="#C8C8C8"/>
<g fill="none" stroke="#666" stroke-width="0.8"><rect x="795.3" y="538" width="9.2" height="8"/><path d="M797.6 538V546M797.6 543.8H804.5"/><rect x="799" y="539.5" width="4" height="2.6"/></g>
<g fill="none" stroke="#777" stroke-width="0.8"><rect x="821.8" y="538.2" width="3.8" height="2.8"/><rect x="827" y="538.2" width="3.8" height="2.8"/><rect x="821.8" y="542.5" width="3.8" height="2.8"/><rect x="827" y="542.5" width="3.8" height="2.8"/></g>
<g fill="none" stroke="#777" stroke-width="0.8"><path d="M848.3 538.4H853.2V545.6H848.3ZM853.2 538.4H858.1V545.6H853.2M849.6 540.4H851.8M849.6 542.2H851.8M854.5 540.4H856.8M854.5 542.2H856.8"/></g>
<g fill="none" stroke="#777" stroke-width="0.8"><path d="M875.2 538.3H884.2M876 538.3V542.6H883.4V538.3M879.7 542.6V545.2M877.8 545.4H881.6"/></g>
<path d="M897.2 541.8H902" stroke="#777" stroke-width="0.9"/>
<rect x="905.6" y="542" width="66.4" height="0.8" fill="#9A9A9A"/>
<rect x="938.3" y="540.3" width="0.7" height="4" fill="#9A9A9A"/>
<rect x="932.9" y="538.4" width="3.2" height="7.2" fill="#555"/>
<path d="M975.3 541.8H980.4M977.85 539.3V544.3" stroke="#777" stroke-width="0.9"/>
<text x="989.40" y="544.8" font-size="7.2" font-family="Liberation Sans" font-weight="normal" fill="#474747" textLength="12.28" lengthAdjust="spacingAndGlyphs" xml:space="preserve">86%</text>
<g fill="none" stroke="#777" stroke-width="0.8"><rect x="1012.4" y="538.2" width="7" height="7"/><path d="M1013.6 539.4L1015.2 541M1018.2 539.4L1016.6 541M1013.6 544L1015.2 542.4M1018.2 544L1016.6 542.4"/></g>
<rect x="83.5" y="92.5" width="96" height="53" fill="#000" opacity="0.08"/>
<rect x="82.7" y="91.8" width="94.6" height="51" fill="#fff" stroke="#C6C6C6" stroke-width="0.9"/>
<rect x="83.2" y="92.3" width="93.6" height="16.4" fill="#EEEEEE"/>
<text x="88.60" y="103.9" font-size="8.3" font-family="Liberation Sans" font-weight="bold" fill="#505050" textLength="71.76" lengthAdjust="spacingAndGlyphs" stroke="#505050" stroke-width="0.05" xml:space="preserve">Insert Picture From</text>
<rect x="83.6" y="110.4" width="92.4" height="15.5" fill="#C5C5C5"/>
<g><rect x="86.3" y="113.3" width="7.6" height="8.2" fill="#fff" stroke="#8A8A8A" stroke-width="0.7"/><path d="M87 121L89.5 117.5L91.5 120Z" fill="#9FBCE0"/><circle cx="91.7" cy="115.3" r="0.9" fill="#EDB54F"/><rect x="89.8" y="117.6" width="6.2" height="4.4" fill="#fff" stroke="#3E79BD" stroke-width="0.8"/><path d="M91.6 123.2H94.2" stroke="#3E79BD" stroke-width="0.9"/></g>
<text x="104.20" y="121.9" font-size="8.3" font-family="Liberation Sans" font-weight="normal" fill="#444" textLength="45.07" lengthAdjust="spacingAndGlyphs" stroke="#444" stroke-width="0.05" xml:space="preserve">This Device...</text>
<rect x="120.3" y="122.8" width="4.6" height="0.6" fill="#444"/>
<g><rect x="86.3" y="128.8" width="7.6" height="8.2" fill="#fff" stroke="#8A8A8A" stroke-width="0.7"/><path d="M87 136.5L89.5 133L91.5 135.5Z" fill="#9FBCE0"/><circle cx="91.7" cy="130.8" r="0.9" fill="#EDB54F"/><circle cx="93.6" cy="135.3" r="2.9" fill="#fff" stroke="#3E79BD" stroke-width="0.8"/><path d="M91.6 135.3H95.6M93.6 132.6V138" stroke="#3E79BD" stroke-width="0.6"/></g>
<text x="104.20" y="137.5" font-size="8.3" font-family="Liberation Sans" font-weight="normal" fill="#555555" textLength="57.08" lengthAdjust="spacingAndGlyphs" stroke="#555555" stroke-width="0.05" xml:space="preserve">Online Pictures...</text>
<rect x="104.3" y="138.4" width="6.2" height="0.6" fill="#444"/>
</svg>
</body></html>
